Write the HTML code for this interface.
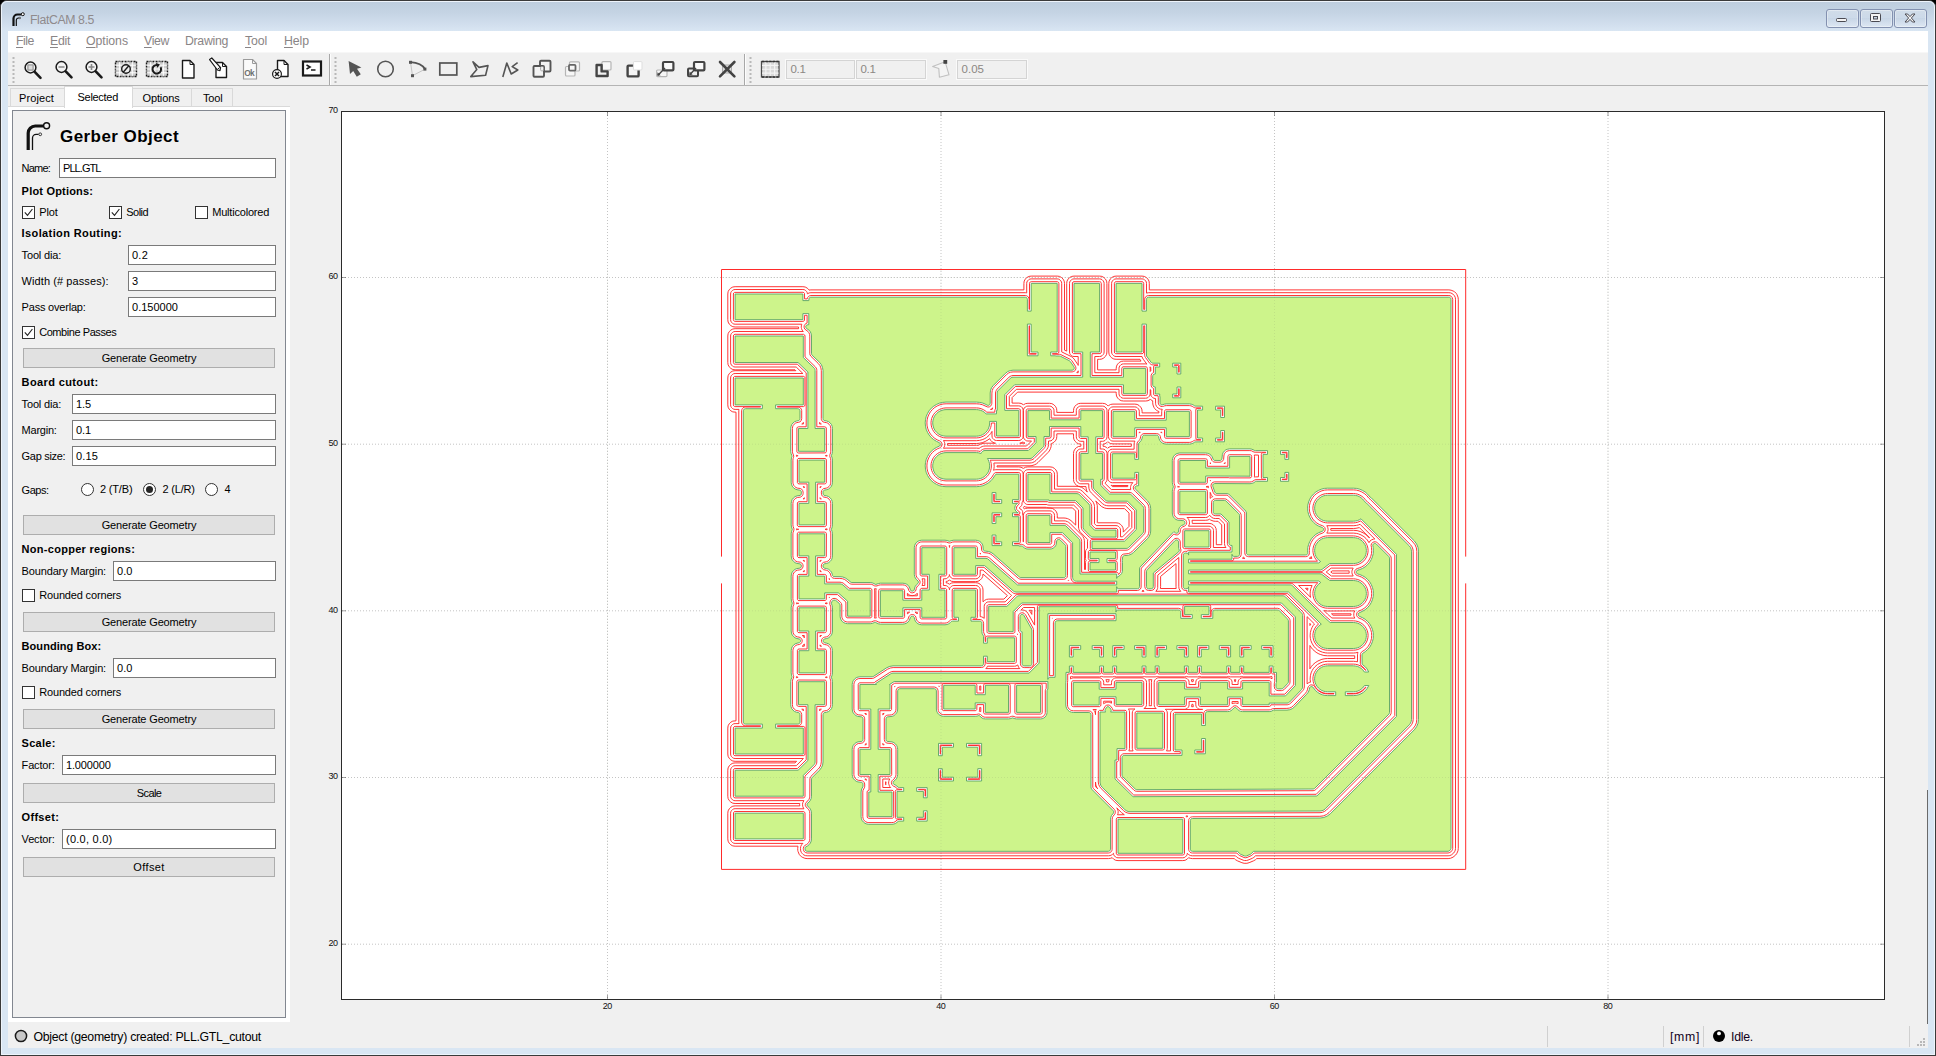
<!DOCTYPE html><html><head><meta charset="utf-8"><title>FlatCAM 8.5</title><style>
html,body{margin:0;padding:0;}
body{width:1936px;height:1056px;position:relative;overflow:hidden;background:#000;font-family:"Liberation Sans",sans-serif;}
.t{position:absolute;white-space:pre;}
#win{position:absolute;left:0;top:0;width:1934px;height:1054px;border:1px solid #3a3a3a;border-radius:7px 7px 0 0;background:#d9e6f3;overflow:hidden;}
#hl{position:absolute;left:0;top:0;width:1932px;height:1052px;border:1px solid #eef4fb;border-radius:6px 6px 0 0;pointer-events:none;}
#title{position:absolute;left:0;top:0;width:1934px;height:30px;background:linear-gradient(#bdcdde 0%,#c5d4e4 40%,#d2dfee 80%,#d9e6f3 100%);}
.cbtn{position:absolute;top:9px;height:17px;width:31px;border:1px solid #8391b0;border-radius:3px;background:linear-gradient(rgba(255,255,255,.25),rgba(255,255,255,.05) 45%,rgba(180,195,215,.15) 50%,rgba(255,255,255,.2));box-shadow:inset 0 0 0 1px rgba(255,255,255,.35);}
#client{position:absolute;left:7px;top:30px;width:1920px;height:1017px;background:#f0f0f0;}
.inp{position:absolute;background:#fff;border:1px solid #7a7a7a;box-sizing:border-box;}
.btn{position:absolute;background:#e1e1e1;border:1px solid #adadad;box-sizing:border-box;}
.cb{position:absolute;width:13px;height:13px;background:#fff;border:1px solid #333;box-sizing:border-box;}
.rb{position:absolute;width:13px;height:13px;background:#fff;border:1px solid #333;box-sizing:border-box;border-radius:50%;}
.dinp{position:absolute;background:#f0f0f0;border:1px solid #d4d4d4;box-sizing:border-box;box-shadow:0 0 0 1px #fafafa;}
svg{position:absolute;overflow:visible;}
</style></head><body>
<div id="win"><div id="title"></div><div id="hl"></div>
<div style="position:absolute;left:-1px;top:-1px;width:1936px;height:1056px;">
<svg style="left:11px;top:11px" width="16" height="16" viewBox="0 0 16 16"><path d="M2.5 15V7.5a4 4 0 0 1 4-4h4.2" fill="none" stroke="#111" stroke-width="2.2"/><path d="M5.3 15V9.2a2.2 2.2 0 0 1 2.2-2.2h0.8" fill="none" stroke="#111" stroke-width="1.2"/><circle cx="11.8" cy="3.2" r="1.5" fill="#fff" stroke="#111" stroke-width="1"/><circle cx="8.8" cy="7" r="0.8" fill="#fff" stroke="#111" stroke-width=".6"/></svg>
<span class="t" style="left:30.00px;top:14.29px;font-size:12.3px;line-height:12.3px;color:#8f8a8c;letter-spacing:-0.395px;">FlatCAM 8.5</span>
<div class="cbtn" style="left:1826px;"></div>
<div class="cbtn" style="left:1860px;"></div>
<div class="cbtn" style="left:1894px;"></div>
<svg style="left:1826px;top:9px" width="100" height="20" viewBox="0 0 100 20"><rect x="10.5" y="9.5" width="10" height="3" rx="1" fill="#f4f4f4" stroke="#4a4a52" stroke-width="1"/><rect x="44.5" y="4.5" width="10" height="8" rx="1" fill="#f4f4f4" stroke="#4a4a52" stroke-width="1"/><rect x="47.5" y="7.5" width="4" height="2.5" fill="#c9d5e3" stroke="#4a4a52" stroke-width="1"/><path d="M79 5l2.6 0 2.4 2.6 2.4-2.6 2.6 0-3.6 4 3.6 4-2.6 0-2.4-2.6-2.4 2.6-2.6 0 3.6-4z" fill="#f4f4f4" stroke="#4a4a52" stroke-width="1" stroke-linejoin="round"/></svg>
<div style="position:absolute;left:8px;top:31px;width:1920px;height:1017px;background:#f0f0f0;"></div>
<div style="position:absolute;left:8px;top:31px;width:1920px;height:21px;background:#fff;"></div>
<div style="position:absolute;left:8px;top:52px;width:1920px;height:1px;background:#f7f7f7;"></div>
<span class="t" style="left:16px;top:35.09px;font-size:12.3px;line-height:12.3px;color:#8a8586;letter-spacing:-0.455px;"><span style="text-decoration:underline;text-underline-offset:1.5px;text-decoration-thickness:1px;">F</span>ile</span>
<span class="t" style="left:50px;top:35.09px;font-size:12.3px;line-height:12.3px;color:#8a8586;letter-spacing:-0.299px;"><span style="text-decoration:underline;text-underline-offset:1.5px;text-decoration-thickness:1px;">E</span>dit</span>
<span class="t" style="left:86px;top:35.09px;font-size:12.3px;line-height:12.3px;color:#8a8586;letter-spacing:-0.055px;"><span style="text-decoration:underline;text-underline-offset:1.5px;text-decoration-thickness:1px;">O</span>ptions</span>
<span class="t" style="left:144px;top:35.09px;font-size:12.3px;line-height:12.3px;color:#8a8586;letter-spacing:-0.359px;"><span style="text-decoration:underline;text-underline-offset:1.5px;text-decoration-thickness:1px;">V</span>iew</span>
<span class="t" style="left:185.00px;top:35.09px;font-size:12.3px;line-height:12.3px;color:#8a8586;letter-spacing:-0.302px;">Drawing</span>
<span class="t" style="left:245px;top:35.09px;font-size:12.3px;line-height:12.3px;color:#8a8586;letter-spacing:-0.141px;"><span style="text-decoration:underline;text-underline-offset:1.5px;text-decoration-thickness:1px;">T</span>ool</span>
<span class="t" style="left:284px;top:35.09px;font-size:12.3px;line-height:12.3px;color:#8a8586;letter-spacing:-0.074px;"><span style="text-decoration:underline;text-underline-offset:1.5px;text-decoration-thickness:1px;">H</span>elp</span>
<div style="position:absolute;left:8px;top:85px;width:1920px;height:1px;background:#b4b4b4;"></div>
<div style="position:absolute;left:329px;top:54px;width:1px;height:31px;background:#a8a8a8;"></div>
<div style="position:absolute;left:330px;top:54px;width:1px;height:31px;background:#fdfdfd;"></div>
<div style="position:absolute;left:744px;top:54px;width:1px;height:31px;background:#a8a8a8;"></div>
<div style="position:absolute;left:745px;top:54px;width:1px;height:31px;background:#fdfdfd;"></div>
<svg style="left:12px;top:56px" width="4" height="28"><path d="M1.5 1v26" stroke="#b9b9b9" stroke-width="2" stroke-dasharray="2 2"/></svg>
<svg style="left:334px;top:56px" width="4" height="28"><path d="M1.5 1v26" stroke="#b9b9b9" stroke-width="2" stroke-dasharray="2 2"/></svg>
<svg style="left:749px;top:56px" width="4" height="28"><path d="M1.5 1v26" stroke="#b9b9b9" stroke-width="2" stroke-dasharray="2 2"/></svg>
<svg style="left:0;top:0" width="1100" height="90" viewBox="0 0 1100 90">
<circle cx="30.5" cy="67.5" r="5.4" fill="#f4f4f4" stroke="#1a1a1a" stroke-width="1.5"/><path d="M34.7 71.9L40.5 77.9" stroke="#1a1a1a" stroke-width="2.6" stroke-linecap="round"/><rect x="27.9" y="64.9" width="5.2" height="5.2" fill="#ddd" stroke="#888" stroke-width="1"/>
<circle cx="61.5" cy="67" r="5.4" fill="#f4f4f4" stroke="#1a1a1a" stroke-width="1.5"/><path d="M65.7 71.4L71.5 77.4" stroke="#1a1a1a" stroke-width="2.6" stroke-linecap="round"/><path d="M58.5 67h6" stroke="#888" stroke-width="1.6"/>
<circle cx="91.5" cy="67" r="5.4" fill="#f4f4f4" stroke="#1a1a1a" stroke-width="1.5"/><path d="M95.7 71.4L101.5 77.4" stroke="#1a1a1a" stroke-width="2.6" stroke-linecap="round"/><path d="M88.5 67h6M91.5 64v6" stroke="#888" stroke-width="1.6"/>
<rect x="115.5" y="61.5" width="21" height="15" fill="#cdcdcd" stroke="#1a1a1a" stroke-width="1.4" stroke-dasharray="2 1"/><path d="M119.7 61.5v15M123.9 61.5v15M128.1 61.5v15M132.3 61.5v15M115.5 65.2h21M115.5 69.0h21M115.5 72.8h21" stroke="#fff" stroke-width="1" fill="none"/>
<circle cx="126" cy="69" r="4.3" fill="#eee" stroke="#1a1a1a" stroke-width="1.4"/><path d="M123.2 72.2l5.6-6.4" stroke="#1a1a1a" stroke-width="1.4"/>
<rect x="146.5" y="61.5" width="21" height="15" fill="#cdcdcd" stroke="#1a1a1a" stroke-width="1.4" stroke-dasharray="2 1"/><path d="M150.7 61.5v15M154.9 61.5v15M159.1 61.5v15M163.3 61.5v15M146.5 65.2h21M146.5 69.0h21M146.5 72.8h21" stroke="#fff" stroke-width="1" fill="none"/>
<path d="M160.6 67.2a4.3 4.3 0 1 1-3.6-2.3" fill="none" stroke="#1a1a1a" stroke-width="2"/><path d="M155.8 63l4.2 1.6-2.6 3.2z" fill="#1a1a1a"/>
<path d="M182.5 60.5h7.5l4 4v13.5h-11.5z" fill="#fff" stroke="#1a1a1a" stroke-width="1.4" stroke-linejoin="round"/><path d="M190.0 60.5v4h4" fill="none" stroke="#1a1a1a" stroke-width="1"/>
<path d="M216 62.5h6.5l4 4v11h-10.5z" fill="#fff" stroke="#1a1a1a" stroke-width="1.4" stroke-linejoin="round"/><path d="M222.5 62.5v4h4" fill="none" stroke="#1a1a1a" stroke-width="1"/>
<path d="M209.6 59.6l2.2-1.6 8.8 9.6-0.6 3-2.6-0.6z" fill="#fff" stroke="#1a1a1a" stroke-width="1.2" stroke-linejoin="round"/><path d="M217.4 69.4l2.4-2" stroke="#1a1a1a" stroke-width="1"/>
<path d="M243.5 59.5h9l4 4v15.5h-13z" fill="#fafafa" stroke="#9a9a9a" stroke-width="1.2" stroke-linejoin="round"/><path d="M252.5 59.5v4h4" fill="none" stroke="#9a9a9a" stroke-width="1"/>
<text x="244.2" y="76" font-family="Liberation Sans, sans-serif" style="font-weight:bold" font-size="8.4" fill="#707070" letter-spacing="-0.6">Ok</text>
<path d="M277.5 60.5h6.5l4 4v12h-10.5z" fill="#fff" stroke="#1a1a1a" stroke-width="1.4" stroke-linejoin="round"/><path d="M284.0 60.5v4h4" fill="none" stroke="#1a1a1a" stroke-width="1"/>
<circle cx="277" cy="74" r="4.4" fill="#fff" stroke="#1a1a1a" stroke-width="1.2"/><path d="M275 72l4 4M279 72l-4 4" stroke="#1a1a1a" stroke-width="1.5"/>
<rect x="303" y="61.5" width="18" height="14" fill="#fff" stroke="#1a1a1a" stroke-width="2.2"/><path d="M306.5 65l3.6 2-3.6 2" fill="none" stroke="#1a1a1a" stroke-width="1.5"/><path d="M311 70h4.5" stroke="#1a1a1a" stroke-width="1.5"/>
<path d="M348.6 61l1.4 13 3.2-3 3.6 5.8 4-2.6-3.8-5.4 4.4-1.2z" fill="#555"/>
<circle cx="385.5" cy="69" r="7.8" fill="none" stroke="#555" stroke-width="1.6"/>
<path d="M410.5 62.2q11 0.6 14.5 7" fill="none" stroke="#555" stroke-width="1.7"/><path d="M410.5 62.2l2 13.5 12.5-6.5" fill="none" stroke="#c4c4c4" stroke-width="1"/><rect x="409" y="60.8" width="3" height="3" fill="#555"/><rect x="423.4" y="67.6" width="3" height="3" fill="#555"/><rect x="411" y="74.2" width="3" height="3" fill="#555"/>
<rect x="439.8" y="63" width="17" height="12" fill="none" stroke="#555" stroke-width="1.7"/>
<path d="M473 61.8l6 5.6 9-1.8-2.4 9.6-14.8 1.4 6-7z" fill="none" stroke="#555" stroke-width="1.6" stroke-linejoin="round"/>
<path d="M502.8 77l4-14 4.4 11 6.6-4-5.6-3.4 5.4-4" fill="none" stroke="#555" stroke-width="1.6" stroke-linejoin="round"/>
<rect x="540" y="60.8" width="10.5" height="10.700000000000003" rx="1" fill="#f4f4f4" stroke="#555" stroke-width="1.9"/>
<rect x="533.5" y="66" width="10.5" height="10.799999999999997" rx="1" fill="#f4f4f4" stroke="#555" stroke-width="1.9"/>
<rect x="540.6" y="66.6" width="3.0" height="4.200000000000003" rx="1" fill="none" stroke="#aaa" stroke-width="1"/>
<rect x="569.5" y="61.8" width="10.0" height="9.200000000000003" rx="1" fill="#f6f6f6" stroke="#b5b5b5" stroke-width="1.2"/>
<rect x="565.5" y="66.5" width="9.5" height="9.5" rx="1" fill="#f6f6f6" stroke="#b5b5b5" stroke-width="1.2"/>
<rect x="569" y="64.8" width="6.5" height="5.799999999999997" rx="1" fill="#f6f6f6" stroke="#666" stroke-width="1.8"/>
<rect x="602" y="61.6" width="9" height="8.399999999999999" rx="1" fill="#f8f8f8" stroke="#b5b5b5" stroke-width="1.2"/>
<path d="M596.6 65v11h11v-4.6h-6v-6.4z" fill="none" stroke="#444" stroke-width="2.4" stroke-linejoin="round"/>
<rect x="627.6" y="65.6" width="11.0" height="10.800000000000011" rx="1" fill="#f4f4f4" stroke="#444" stroke-width="2.4"/>
<rect x="633.4" y="61.6" width="8.600000000000023" height="8.399999999999999" rx="1" fill="#fff" stroke="#ddd" stroke-width="1"/>
<rect x="656.6" y="70" width="10.399999999999977" height="6.599999999999994" rx="1" fill="#f6f6f6" stroke="#b5b5b5" stroke-width="1.2"/>
<rect x="663" y="62" width="10.399999999999977" height="8.400000000000006" rx="1" fill="#fafafa" stroke="#444" stroke-width="2.2"/>
<path d="M665 68l-7 7.2" stroke="#444" stroke-width="1.4"/><path d="M657.2 75.8l0.4-3.6 3 3z" fill="#444"/>
<rect x="688" y="68.4" width="10" height="7.799999999999997" rx="1" fill="#f0f0f0" stroke="#444" stroke-width="2"/>
<rect x="694" y="62" width="10.399999999999977" height="8.400000000000006" rx="1" fill="#fafafa" stroke="#444" stroke-width="2.2"/>
<path d="M696 68l-6 6.4" stroke="#444" stroke-width="1.4"/><path d="M689.2 75.2l0.4-3.6 3 3z" fill="#444"/>
<rect x="722.5" y="65" width="9" height="8" fill="#ddd" stroke="#aaa" stroke-width="1"/><path d="M720 62l14.4 14.4M734.4 62l-14.4 14.4" stroke="#444" stroke-width="2.6" stroke-linecap="round"/>
<rect x="761.5" y="61.5" width="17.5" height="15.5" fill="#d9d9d9" stroke="#4a4a4a" stroke-width="1.3"/><path d="M765.9 62v14.5M770.2 62v14.5M774.6 62v14.5M762 65.4h16.5M762 69.3h16.5M762 73.1h16.5" stroke="#f4f4f4" stroke-width="1.1" fill="none"/><path d="M762 61.5h17M762 77h17" stroke="#333" stroke-width="1.3" stroke-dasharray="2.2 1.4"/>
<path d="M932.6 66.4l12.6-4.6 3.8 13-9.6 2.4-0.6-8.6z" fill="#f4f4f4" stroke="#c0c0c0" stroke-width="1.1" stroke-linejoin="round"/><rect x="943.4" y="60" width="3.8" height="3.8" fill="#444"/>
</svg>
<div class="dinp" style="left:786px;top:60px;width:69px;height:19px;"></div>
<span class="t" style="left:790.50px;top:63.67px;font-size:11.5px;line-height:11.5px;color:#8c8783;letter-spacing:-0.328px;">0.1</span>
<div class="dinp" style="left:856px;top:60px;width:70px;height:19px;"></div>
<span class="t" style="left:860.50px;top:63.67px;font-size:11.5px;line-height:11.5px;color:#8c8783;letter-spacing:-0.328px;">0.1</span>
<div class="dinp" style="left:957px;top:60px;width:70px;height:19px;"></div>
<span class="t" style="left:961.50px;top:63.67px;font-size:11.5px;line-height:11.5px;color:#8c8783;letter-spacing:0.030px;">0.05</span>
<div style="position:absolute;left:8px;top:107px;width:282px;height:915px;background:#fff;"></div>
<div style="position:absolute;left:8px;top:106px;width:282px;height:1px;background:#d9d9d9;"></div>
<div style="position:absolute;left:10px;top:88px;width:55px;height:18px;background:#f0f0f0;border:1px solid #d9d9d9;border-bottom:none;box-sizing:border-box;"></div>
<div style="position:absolute;left:132px;top:88px;width:60px;height:18px;background:#f0f0f0;border:1px solid #d9d9d9;border-bottom:none;box-sizing:border-box;"></div>
<div style="position:absolute;left:191px;top:88px;width:42px;height:18px;background:#f0f0f0;border:1px solid #d9d9d9;border-bottom:none;box-sizing:border-box;"></div>
<div style="position:absolute;left:64px;top:86px;width:69px;height:22px;background:#fff;border:1px solid #d9d9d9;border-bottom:none;box-sizing:border-box;"></div>
<span class="t" style="left:19.00px;top:92.69px;font-size:11px;line-height:11px;color:#000;letter-spacing:0.109px;">Project</span>
<span class="t" style="left:77.50px;top:92.09px;font-size:11px;line-height:11px;color:#000;letter-spacing:-0.288px;">Selected</span>
<span class="t" style="left:142.50px;top:92.69px;font-size:11px;line-height:11px;color:#000;letter-spacing:-0.130px;">Options</span>
<span class="t" style="left:203.00px;top:92.69px;font-size:11px;line-height:11px;color:#000;letter-spacing:-0.170px;">Tool</span>
<div style="position:absolute;left:12px;top:110px;width:274px;height:908px;background:#f0f0f0;border:1px solid #828790;box-sizing:border-box;"></div>
<svg style="left:24px;top:120px" width="30" height="32" viewBox="0 0 30 32"><path d="M4.2 30V13a7 7 0 0 1 7-7h8.5" fill="none" stroke="#111" stroke-width="3.2"/><path d="M8.5 30V18a3.6 3.6 0 0 1 3.6-3.6h2.6" fill="none" stroke="#111" stroke-width="1.3"/><circle cx="22.6" cy="5.8" r="3" fill="#f0f0f0" stroke="#111" stroke-width="1.4"/><circle cx="16.2" cy="14.3" r="1.4" fill="#f0f0f0" stroke="#111" stroke-width=".8"/></svg>
<span class="t" style="left:60.00px;top:127.61px;font-size:17px;line-height:17px;color:#000;letter-spacing:0.433px;font-weight:bold;">Gerber Object</span>
<span class="t" style="left:21.60px;top:163.19px;font-size:11px;line-height:11px;color:#000;letter-spacing:-0.779px;">Name:</span>
<div class="inp" style="left:59px;top:158px;width:217px;height:20px;"></div>
<span class="t" style="left:63.00px;top:163.39px;font-size:11px;line-height:11px;color:#000;letter-spacing:-0.931px;">PLL.GTL</span>
<span class="t" style="left:21.60px;top:186.19px;font-size:11px;line-height:11px;color:#000;letter-spacing:0.197px;font-weight:bold;">Plot Options:</span>
<div class="cb" style="left:22px;top:206px;"><svg style="left:0;top:0" width="11" height="11" viewBox="0 0 11 11"><path d="M1.8 5.4l2.7 2.9 4.9-6.3" fill="none" stroke="#222" stroke-width="1.1"/></svg></div>
<span class="t" style="left:39.20px;top:206.89px;font-size:11px;line-height:11px;color:#000;letter-spacing:-0.114px;">Plot</span>
<div class="cb" style="left:109px;top:206px;"><svg style="left:0;top:0" width="11" height="11" viewBox="0 0 11 11"><path d="M1.8 5.4l2.7 2.9 4.9-6.3" fill="none" stroke="#222" stroke-width="1.1"/></svg></div>
<span class="t" style="left:126.20px;top:206.89px;font-size:11px;line-height:11px;color:#000;letter-spacing:-0.492px;">Solid</span>
<div class="cb" style="left:195px;top:206px;"></div>
<span class="t" style="left:212.20px;top:206.89px;font-size:11px;line-height:11px;color:#000;letter-spacing:-0.192px;">Multicolored</span>
<span class="t" style="left:21.60px;top:228.49px;font-size:11px;line-height:11px;color:#000;letter-spacing:0.390px;font-weight:bold;">Isolation Routing:</span>
<span class="t" style="left:21.60px;top:249.89px;font-size:11px;line-height:11px;color:#000;letter-spacing:-0.163px;">Tool dia:</span>
<div class="inp" style="left:128px;top:245px;width:148px;height:20px;"></div>
<span class="t" style="left:132.00px;top:250.39px;font-size:11px;line-height:11px;color:#000;letter-spacing:0.237px;">0.2</span>
<span class="t" style="left:21.60px;top:275.89px;font-size:11px;line-height:11px;color:#000;letter-spacing:0.084px;">Width (# passes):</span>
<div class="inp" style="left:128px;top:271px;width:148px;height:20px;"></div>
<span class="t" style="left:132.00px;top:276.39px;font-size:11px;line-height:11px;color:#000;">3</span>
<span class="t" style="left:21.60px;top:301.69px;font-size:11px;line-height:11px;color:#000;letter-spacing:-0.203px;">Pass overlap:</span>
<div class="inp" style="left:128px;top:297px;width:148px;height:20px;"></div>
<span class="t" style="left:132.00px;top:302.39px;font-size:11px;line-height:11px;color:#000;letter-spacing:0.016px;">0.150000</span>
<div class="cb" style="left:22px;top:326px;"><svg style="left:0;top:0" width="11" height="11" viewBox="0 0 11 11"><path d="M1.8 5.4l2.7 2.9 4.9-6.3" fill="none" stroke="#222" stroke-width="1.1"/></svg></div>
<span class="t" style="left:39.20px;top:326.89px;font-size:11px;line-height:11px;color:#000;letter-spacing:-0.439px;">Combine Passes</span>
<div class="btn" style="left:23px;top:348px;width:252px;height:20px;"></div>
<span class="t" style="left:101.70px;top:352.99px;font-size:11px;line-height:11px;color:#000;letter-spacing:-0.153px;">Generate Geometry</span>
<span class="t" style="left:21.60px;top:377.29px;font-size:11px;line-height:11px;color:#000;letter-spacing:0.377px;font-weight:bold;">Board cutout:</span>
<span class="t" style="left:21.60px;top:398.89px;font-size:11px;line-height:11px;color:#000;letter-spacing:-0.163px;">Tool dia:</span>
<div class="inp" style="left:72px;top:394px;width:204px;height:20px;"></div>
<span class="t" style="left:76.00px;top:399.39px;font-size:11px;line-height:11px;color:#000;letter-spacing:-0.097px;">1.5</span>
<span class="t" style="left:21.60px;top:424.89px;font-size:11px;line-height:11px;color:#000;letter-spacing:-0.239px;">Margin:</span>
<div class="inp" style="left:72px;top:420px;width:204px;height:20px;"></div>
<span class="t" style="left:76.00px;top:425.39px;font-size:11px;line-height:11px;color:#000;letter-spacing:-0.097px;">0.1</span>
<span class="t" style="left:21.60px;top:450.89px;font-size:11px;line-height:11px;color:#000;letter-spacing:-0.307px;">Gap size:</span>
<div class="inp" style="left:72px;top:446px;width:204px;height:20px;"></div>
<span class="t" style="left:76.00px;top:451.39px;font-size:11px;line-height:11px;color:#000;letter-spacing:0.148px;">0.15</span>
<span class="t" style="left:21.60px;top:484.89px;font-size:11px;line-height:11px;color:#000;letter-spacing:-0.469px;">Gaps:</span>
<div class="rb" style="left:80.5px;top:483.0px;"></div>
<span class="t" style="left:100.00px;top:484.39px;font-size:11px;line-height:11px;color:#000;letter-spacing:-0.173px;">2 (T/B)</span>
<div class="rb" style="left:143.0px;top:483.0px;"><div style="position:absolute;left:2px;top:2px;width:7px;height:7px;border-radius:50%;background:#262626;"></div></div>
<span class="t" style="left:162.50px;top:484.39px;font-size:11px;line-height:11px;color:#000;letter-spacing:-0.188px;">2 (L/R)</span>
<div class="rb" style="left:205.0px;top:483.0px;"></div>
<span class="t" style="left:224.50px;top:484.39px;font-size:11px;line-height:11px;color:#000;">4</span>
<div class="btn" style="left:23px;top:515px;width:252px;height:20px;"></div>
<span class="t" style="left:101.70px;top:519.99px;font-size:11px;line-height:11px;color:#000;letter-spacing:-0.153px;">Generate Geometry</span>
<span class="t" style="left:21.60px;top:544.09px;font-size:11px;line-height:11px;color:#000;letter-spacing:0.286px;font-weight:bold;">Non-copper regions:</span>
<span class="t" style="left:21.60px;top:565.89px;font-size:11px;line-height:11px;color:#000;letter-spacing:-0.151px;">Boundary Margin:</span>
<div class="inp" style="left:113px;top:561px;width:163px;height:20px;"></div>
<span class="t" style="left:117.00px;top:566.39px;font-size:11px;line-height:11px;color:#000;letter-spacing:0.070px;">0.0</span>
<div class="cb" style="left:22px;top:589px;"></div>
<span class="t" style="left:39.20px;top:589.89px;font-size:11px;line-height:11px;color:#000;letter-spacing:-0.159px;">Rounded corners</span>
<div class="btn" style="left:23px;top:612px;width:252px;height:20px;"></div>
<span class="t" style="left:101.70px;top:616.99px;font-size:11px;line-height:11px;color:#000;letter-spacing:-0.153px;">Generate Geometry</span>
<span class="t" style="left:21.60px;top:641.49px;font-size:11px;line-height:11px;color:#000;letter-spacing:0.053px;font-weight:bold;">Bounding Box:</span>
<span class="t" style="left:21.60px;top:662.89px;font-size:11px;line-height:11px;color:#000;letter-spacing:-0.151px;">Boundary Margin:</span>
<div class="inp" style="left:113px;top:658px;width:163px;height:20px;"></div>
<span class="t" style="left:117.00px;top:663.39px;font-size:11px;line-height:11px;color:#000;letter-spacing:0.070px;">0.0</span>
<div class="cb" style="left:22px;top:686px;"></div>
<span class="t" style="left:39.20px;top:686.89px;font-size:11px;line-height:11px;color:#000;letter-spacing:-0.159px;">Rounded corners</span>
<div class="btn" style="left:23px;top:709px;width:252px;height:20px;"></div>
<span class="t" style="left:101.70px;top:713.99px;font-size:11px;line-height:11px;color:#000;letter-spacing:-0.153px;">Generate Geometry</span>
<span class="t" style="left:21.60px;top:738.49px;font-size:11px;line-height:11px;color:#000;letter-spacing:0.265px;font-weight:bold;">Scale:</span>
<span class="t" style="left:21.60px;top:759.89px;font-size:11px;line-height:11px;color:#000;letter-spacing:-0.175px;">Factor:</span>
<div class="inp" style="left:62px;top:755px;width:214px;height:20px;"></div>
<span class="t" style="left:66.00px;top:760.39px;font-size:11px;line-height:11px;color:#000;letter-spacing:-0.159px;">1.000000</span>
<div class="btn" style="left:23px;top:783px;width:252px;height:20px;"></div>
<span class="t" style="left:136.75px;top:787.99px;font-size:11px;line-height:11px;color:#000;letter-spacing:-0.603px;">Scale</span>
<span class="t" style="left:21.60px;top:811.99px;font-size:11px;line-height:11px;color:#000;letter-spacing:0.294px;font-weight:bold;">Offset:</span>
<span class="t" style="left:21.60px;top:833.89px;font-size:11px;line-height:11px;color:#000;letter-spacing:-0.177px;">Vector:</span>
<div class="inp" style="left:62px;top:829px;width:214px;height:20px;"></div>
<span class="t" style="left:66.00px;top:834.39px;font-size:11px;line-height:11px;color:#000;letter-spacing:0.248px;">(0.0, 0.0)</span>
<div class="btn" style="left:23px;top:857px;width:252px;height:20px;"></div>
<span class="t" style="left:133.25px;top:861.99px;font-size:11px;line-height:11px;color:#000;letter-spacing:0.393px;">Offset</span>
<svg style="left:14px;top:1029px" width="14" height="14"><circle cx="7" cy="7" r="5.6" fill="#c8c8c8" stroke="#1a1a1a" stroke-width="1.5"/></svg>
<span class="t" style="left:33.50px;top:1030.59px;font-size:12.3px;line-height:12.3px;color:#000;letter-spacing:-0.287px;">Object (geometry) created: PLL.GTL_cutout</span>
<div style="position:absolute;left:1547px;top:1026px;width:1px;height:21px;background:#d0d0d0;"></div>
<div style="position:absolute;left:1663px;top:1026px;width:1px;height:21px;background:#d0d0d0;"></div>
<div style="position:absolute;left:1703px;top:1026px;width:1px;height:21px;background:#d0d0d0;"></div>
<div style="position:absolute;left:1909px;top:1026px;width:1px;height:21px;background:#d0d0d0;"></div>
<span class="t" style="left:1670.00px;top:1030.59px;font-size:12.3px;line-height:12.3px;color:#100020;letter-spacing:0.669px;">[mm]</span>
<svg style="left:1712px;top:1029px" width="14" height="14"><circle cx="7" cy="7" r="6" fill="#000"/><circle cx="7" cy="4.4" r="1.9" fill="#fff"/></svg>
<span class="t" style="left:1731.00px;top:1030.59px;font-size:12.3px;line-height:12.3px;color:#100020;letter-spacing:-0.249px;">Idle.</span>
<svg style="left:1915px;top:1036px" width="12" height="12"><g fill="#b8b8b8"><rect x="8" y="2" width="2" height="2"/><rect x="5" y="5" width="2" height="2"/><rect x="8" y="5" width="2" height="2"/><rect x="2" y="8" width="2" height="2"/><rect x="5" y="8" width="2" height="2"/><rect x="8" y="8" width="2" height="2"/></g></svg>
<div style="position:absolute;left:1927px;top:790px;width:1px;height:234px;background:#6a6a6a;"></div>
<div style="position:absolute;left:341px;top:111px;width:1544px;height:889px;background:#fff;"></div>
<svg style="left:0;top:0" width="1936" height="1056" viewBox="0 0 1936 1056">
<path d="M607.5 112V999" stroke="#c4c4c4" stroke-width="1" stroke-dasharray="1 2" fill="none"/>
<path d="M607.5 112v4M607.5 995v4" stroke="#333" stroke-width="1" stroke-opacity=".45"/>
<path d="M941 112V999" stroke="#c4c4c4" stroke-width="1" stroke-dasharray="1 2" fill="none"/>
<path d="M941 112v4M941 995v4" stroke="#333" stroke-width="1" stroke-opacity=".45"/>
<path d="M1274.5 112V999" stroke="#c4c4c4" stroke-width="1" stroke-dasharray="1 2" fill="none"/>
<path d="M1274.5 112v4M1274.5 995v4" stroke="#333" stroke-width="1" stroke-opacity=".45"/>
<path d="M1608 112V999" stroke="#c4c4c4" stroke-width="1" stroke-dasharray="1 2" fill="none"/>
<path d="M1608 112v4M1608 995v4" stroke="#333" stroke-width="1" stroke-opacity=".45"/>
<path d="M342 277.5H1884" stroke="#c4c4c4" stroke-width="1" stroke-dasharray="1 2" fill="none"/>
<path d="M342 277.5h4M1880 277.5h4" stroke="#333" stroke-width="1" stroke-opacity=".45"/>
<path d="M342 444.2H1884" stroke="#c4c4c4" stroke-width="1" stroke-dasharray="1 2" fill="none"/>
<path d="M342 444.2h4M1880 444.2h4" stroke="#333" stroke-width="1" stroke-opacity=".45"/>
<path d="M342 610.8H1884" stroke="#c4c4c4" stroke-width="1" stroke-dasharray="1 2" fill="none"/>
<path d="M342 610.8h4M1880 610.8h4" stroke="#333" stroke-width="1" stroke-opacity=".45"/>
<path d="M342 777.5H1884" stroke="#c4c4c4" stroke-width="1" stroke-dasharray="1 2" fill="none"/>
<path d="M342 777.5h4M1880 777.5h4" stroke="#333" stroke-width="1" stroke-opacity=".45"/>
<path d="M342 944.2H1884" stroke="#c4c4c4" stroke-width="1" stroke-dasharray="1 2" fill="none"/>
<path d="M342 944.2h4M1880 944.2h4" stroke="#333" stroke-width="1" stroke-opacity=".45"/>
<path d="M727.8,404.9L728.1,407.2L729.2,409.2L730.8,410.8L732.8,411.9L736.0,412.2L736.0,720.8L732.8,721.1L730.8,722.2L729.2,723.8L728.1,725.8L727.8,728.1L727.8,754.0L728.1,756.3L729.2,758.3L730.8,759.9L732.8,761.0L735.1,761.3L796.6,761.3L795.1,762.9L735.1,762.9L732.8,763.2L730.8,764.3L729.2,765.9L728.1,767.9L727.8,770.2L727.8,796.2L728.1,798.5L729.2,800.5L730.8,802.1L732.8,803.2L735.1,803.5L799.8,803.5L799.6,804.3L799.8,805.9L735.1,805.9L732.8,806.2L730.8,807.3L729.2,808.9L728.1,810.9L727.8,813.2L727.8,838.9L728.1,841.2L729.2,843.2L730.8,844.8L732.8,845.9L735.1,846.2L798.0,846.2L797.7,848.4L797.8,850.6L798.0,851.4L799.1,854.1L799.5,854.8L801.5,856.8L802.2,857.2L804.9,858.3L807.1,858.6L1108.4,858.6L1110.6,858.3L1112.2,857.7L1113.7,859.2L1115.7,860.3L1118.0,860.6L1182.8,860.6L1185.1,860.3L1187.1,859.2L1188.6,857.7L1190.2,858.3L1192.4,858.6L1234.3,858.6L1235.5,859.7L1237.6,860.9L1241.9,862.7L1244.1,863.3L1246.9,863.3L1249.1,862.7L1253.4,860.9L1255.5,859.7L1256.7,858.6L1448.1,858.6L1450.4,858.3L1453.0,857.2L1455.6,855.1L1456.9,853.3L1458.0,850.7L1458.3,848.4L1458.3,299.3L1458.0,297.1L1456.9,294.4L1456.5,293.7L1454.5,291.7L1453.8,291.3L1451.1,290.2L1448.9,289.9L1149.3,289.9L1149.3,283.4L1149.0,281.1L1147.9,279.1L1146.3,277.5L1144.3,276.4L1142.0,276.1L1116.1,276.1L1113.8,276.4L1111.8,277.5L1110.2,279.1L1109.1,281.1L1108.8,283.4L1108.8,352.0L1109.1,354.3L1110.2,356.3L1111.8,357.9L1113.8,359.0L1116.1,359.3L1140.0,359.3L1141.0,361.1L1123.5,361.1L1121.2,361.4L1119.2,362.5L1117.6,364.1L1116.5,366.1L1116.2,368.4L1116.2,369.9L1097.6,369.9L1097.6,359.3L1099.6,359.3L1101.9,359.0L1103.9,357.9L1105.5,356.3L1106.6,354.3L1106.9,352.0L1106.9,283.4L1106.6,281.1L1105.5,279.1L1103.9,277.5L1101.9,276.4L1099.6,276.1L1074.0,276.1L1071.7,276.4L1069.7,277.5L1068.1,279.1L1067.0,281.1L1066.7,283.4L1066.7,351.1L1064.5,350.1L1064.5,283.4L1064.2,281.1L1063.1,279.1L1061.5,277.5L1059.5,276.4L1057.2,276.1L1031.2,276.1L1028.9,276.4L1026.9,277.5L1025.3,279.1L1024.2,281.1L1023.9,283.4L1023.9,289.9L810.9,289.9L809.0,290.1L808.8,289.7L807.2,288.1L805.2,287.0L802.9,286.7L735.1,286.7L732.8,287.0L730.8,288.1L729.2,289.7L728.1,291.7L727.8,294.0L727.8,319.7L728.1,322.0L729.2,324.0L730.8,325.6L732.8,326.7L735.1,327.0L798.5,327.0L798.6,328.7L735.1,328.7L732.8,329.0L730.8,330.1L729.2,331.7L728.1,333.7L727.8,336.0L727.8,362.5L728.1,364.8L729.2,366.8L730.8,368.4L732.8,369.5L735.1,369.8L795.0,369.8L795.9,370.7L735.1,370.7L732.8,371.0L730.8,372.1L729.2,373.7L728.1,375.7L727.8,378.0ZM1330.8,528.5L1353.4,528.5L1356.0,528.3L1359.4,527.6L1369.6,537.8L1369.3,538.0L1367.4,535.8L1365.8,534.5L1363.1,532.8L1360.2,531.5L1357.1,530.6L1353.4,530.3L1330.8,530.3ZM1024.5,509.0L1023.4,507.8L1023.9,507.1L1024.2,506.3L1025.6,507.0L1027.9,507.3L1046.3,507.3L1046.7,507.6L1049.0,507.9L1072.5,507.9L1075.7,511.1L1075.7,525.1L1071.0,520.6L1068.6,519.1L1067.7,518.7L1065.9,518.2L1064.0,518.0L1057.3,518.0L1057.3,515.4L1057.0,513.1L1055.9,511.1L1054.3,509.5L1052.3,508.4L1050.0,508.1L1027.9,508.1L1025.6,508.4ZM1023.3,468.5L1023.1,468.3L1021.0,467.2L1018.8,466.9L997.0,466.9L997.0,465.8L1030.0,465.8L1032.0,465.6L1034.8,464.7L1036.5,463.8L1038.0,462.5L1048.0,452.5L1049.3,451.0L1050.6,448.3L1051.1,446.5L1051.3,443.5L1051.8,443.5L1053.8,442.4L1055.4,440.8L1056.5,438.8L1056.8,436.5L1056.8,433.8L1073.5,433.8L1073.5,436.8L1073.8,439.1L1074.9,441.1L1076.5,442.7L1078.5,443.8L1080.9,444.1L1080.9,446.2L1078.5,446.5L1076.5,447.6L1074.9,449.2L1073.8,451.2L1073.5,453.5L1073.5,479.3L1073.8,481.6L1074.9,483.6L1076.5,485.2L1078.5,486.3L1080.8,486.6L1086.0,486.6L1086.2,488.9L1086.7,490.8L1087.4,492.1L1084.7,489.4L1083.2,488.3L1081.6,487.3L1078.9,486.5L1077.0,486.3L1057.3,486.3L1057.3,474.2L1057.0,471.9L1055.9,469.9L1054.3,468.3L1052.3,467.2L1050.0,466.9L1027.9,466.9L1025.6,467.2L1023.6,468.3ZM947.5,445.3L947.5,443.5L976.4,443.5L979.1,443.3L982.2,442.7L985.2,441.5L988.0,439.9L989.7,438.6L990.6,440.3L992.2,441.9L994.2,443.0L995.5,443.2L984.0,443.2L981.2,443.9L980.2,444.3L978.3,445.4L976.4,445.3ZM1019.8,443.2L1021.0,443.0L1023.1,441.9L1023.6,442.4L1025.0,443.2ZM1023.4,404.8L1023.1,404.5L1021.0,403.4L1018.8,403.1L1012.1,403.1L1012.1,397.6L1017.6,392.1L1116.2,392.1L1116.2,393.7L1116.5,396.0L1117.6,398.0L1119.2,399.6L1121.2,400.7L1123.5,401.0L1145.7,401.0L1148.0,400.7L1150.0,399.6L1150.3,399.3L1151.0,399.9L1152.7,400.8L1152.7,402.8L1153.0,405.0L1154.1,407.7L1154.5,408.3L1156.5,410.4L1157.2,410.8L1158.9,411.5L1158.9,412.9L1142.1,412.9L1142.1,411.4L1141.8,409.1L1140.7,407.1L1139.1,405.5L1137.1,404.4L1134.8,404.1L1113.0,404.1L1110.7,404.4L1108.7,405.5L1108.1,406.0L1106.8,404.7L1104.8,403.6L1102.5,403.3L1080.8,403.3L1078.5,403.6L1076.5,404.7L1074.9,406.3L1073.8,408.3L1073.5,410.6L1073.5,412.4L1056.8,412.4L1056.8,410.6L1056.5,408.3L1055.4,406.3L1053.8,404.7L1051.8,403.6L1049.5,403.3L1027.9,403.3L1025.6,403.6ZM1131.3,443.9L1131.3,446.4L1112.3,446.4L1110.0,446.7L1108.0,447.8L1107.5,448.3L1106.8,447.6L1104.8,446.5L1103.1,446.3L1103.1,444.0L1104.8,443.8L1106.8,442.7L1107.8,441.7L1108.7,442.5L1110.7,443.6L1113.0,443.9ZM1111.1,485.3L1112.3,485.5L1128.0,485.5L1127.7,486.6L1112.4,486.6ZM1123.3,532.1L1123.3,530.1L1123.0,527.8L1121.9,525.8L1120.3,524.2L1118.3,523.1L1116.0,522.8L1097.5,522.8L1097.3,522.6L1097.3,505.6L1096.7,502.9L1095.7,501.0L1101.1,506.1L1101.8,506.7L1104.3,507.9L1106.1,508.4L1108.0,508.6L1124.5,508.6L1129.0,513.1L1129.0,526.4ZM949.5,580.1L951.6,581.3L953.9,581.6L975.7,581.6L978.0,581.3L980.0,580.2L981.6,578.6L982.7,576.6L983.0,574.0L1007.4,595.6L1003.9,599.1L988.7,599.1L986.4,599.4L984.4,600.5L983.0,601.8L983.0,590.0L982.7,587.7L981.6,585.7L980.0,584.1L978.0,583.0L975.7,582.7L953.9,582.7L951.6,583.0L949.5,584.2L947.3,583.0L946.2,582.9L946.2,581.4L947.3,581.3ZM1031.8,610.3L1031.8,614.4L1030.3,611.8L1029.2,610.3ZM886.0,784.7L885.6,784.7L885.6,781.8L886.0,781.8L885.8,783.6ZM1305.5,588.3L1308.0,588.3L1307.5,590.4ZM1309.9,623.4L1310.7,624.2L1309.9,625.5ZM1235.8,679.7L1235.4,681.7L1234.8,681.7L1234.4,679.7ZM1193.5,679.7L1193.1,681.7L1191.8,681.7L1191.4,679.7ZM1151.9,679.7L1151.7,680.0L1151.4,682.3L1151.4,704.8L1151.5,705.7L1149.1,705.7L1149.3,704.5L1149.3,682.4L1149.0,680.1L1148.7,679.7ZM1109.3,679.7L1109.0,680.1L1108.7,681.9L1106.5,681.9L1106.2,680.1L1105.9,679.7ZM1192.0,520.3L1205.7,520.3L1208.0,520.0L1209.5,519.2L1210.4,519.9L1213.1,521.0L1215.3,521.3L1218.0,521.3L1221.7,525.0L1221.7,543.4L1221.8,544.7L1216.3,544.7L1216.3,530.7L1216.0,528.4L1214.9,526.4L1213.3,524.8L1211.3,523.7L1209.0,523.4L1192.3,523.4L1192.3,522.6ZM1160.4,588.5L1160.6,586.7L1160.6,576.4L1176.0,563.6L1176.0,586.7L1176.2,588.5ZM1331.5,613.8L1351.0,613.8L1351.0,615.2L1333.0,615.2ZM1349.2,573.2L1332.3,573.2L1330.8,572.0L1332.1,570.9L1349.2,570.9L1349.1,571.7ZM1354.7,655.8L1354.7,658.5L1327.6,658.5L1325.0,658.7L1321.9,659.3L1317.9,661.0L1315.2,662.7L1312.8,664.8L1311.5,666.4L1309.9,668.8L1309.9,645.5L1311.5,647.9L1312.8,649.5L1316.1,652.3L1318.9,653.9L1320.8,654.6L1323.9,655.5L1327.6,655.8ZM1193.3,706.7L1191.6,706.7L1191.9,704.3L1193.0,704.3ZM1021.3,509.6L1021.5,509.5L1021.3,509.7Z" fill="none" stroke="#ff2a2a" stroke-width="0.95" stroke-linejoin="round"/>
<path d="M730.6,404.9L730.8,406.3L731.5,407.5L732.5,408.5L733.7,409.2L735.1,409.4L739.0,409.4L738.8,410.8L738.8,722.0L739.0,723.6L735.1,723.6L733.7,723.8L732.5,724.5L731.5,725.5L730.8,726.7L730.6,728.1L730.6,754.0L730.8,755.4L731.5,756.6L732.5,757.6L733.7,758.3L735.1,758.5L803.4,758.5L796.3,765.7L735.1,765.7L733.7,765.9L732.5,766.6L731.5,767.6L730.8,768.8L730.6,770.2L730.6,796.2L730.8,797.6L731.5,798.8L732.5,799.8L733.7,800.5L735.1,800.7L803.9,800.6L802.8,802.7L802.5,804.3L802.8,806.7L803.9,808.8L735.1,808.7L733.7,808.9L732.5,809.6L731.5,810.6L730.8,811.8L730.6,813.2L730.6,838.9L730.8,840.3L731.5,841.5L732.5,842.5L733.7,843.2L735.1,843.4L802.9,843.4L801.9,844.4L801.4,845.1L800.7,846.7L800.5,848.4L800.7,850.9L801.4,852.5L801.9,853.2L803.1,854.4L803.8,854.9L805.4,855.6L807.1,855.8L1108.4,855.8L1110.1,855.6L1111.7,854.9L1112.4,854.4L1113.5,853.3L1113.7,854.7L1114.4,855.9L1115.4,856.9L1116.6,857.6L1118.0,857.8L1182.8,857.8L1184.2,857.6L1185.4,856.9L1186.4,855.9L1187.1,854.7L1187.3,853.3L1188.4,854.4L1189.1,854.9L1190.7,855.6L1192.4,855.8L1235.5,855.8L1237.1,857.4L1238.7,858.3L1243.8,860.4L1244.6,860.5L1246.4,860.5L1248.0,860.1L1252.3,858.3L1253.9,857.4L1255.5,855.8L1448.1,855.8L1449.8,855.6L1451.4,854.9L1453.6,853.1L1454.6,851.7L1455.3,850.1L1455.5,848.4L1455.5,299.3L1455.3,297.6L1454.6,296.0L1454.1,295.3L1452.9,294.1L1452.2,293.6L1450.6,292.9L1448.9,292.7L1148.5,292.7L1146.5,293.1L1146.5,283.4L1146.3,282.0L1145.6,280.8L1144.6,279.8L1143.4,279.1L1142.0,278.9L1116.1,278.9L1114.7,279.1L1113.5,279.8L1112.5,280.8L1111.8,282.0L1111.6,283.4L1111.6,352.0L1111.8,353.4L1112.5,354.6L1113.5,355.6L1114.7,356.3L1116.1,356.5L1142.0,356.5L1142.5,358.0L1143.2,359.2L1146.8,364.1L1145.7,363.9L1123.5,363.9L1122.1,364.1L1120.9,364.8L1119.9,365.8L1119.2,367.0L1119.0,368.4L1119.0,372.7L1094.8,372.7L1094.8,356.5L1099.6,356.5L1101.0,356.3L1102.2,355.6L1103.2,354.6L1103.9,353.4L1104.1,352.0L1104.1,283.4L1103.9,282.0L1103.2,280.8L1102.2,279.8L1101.0,279.1L1099.6,278.9L1074.0,278.9L1072.6,279.1L1071.4,279.8L1070.4,280.8L1069.7,282.0L1069.5,283.4L1069.5,352.0L1069.7,353.4L1070.4,354.6L1071.4,355.6L1072.6,356.3L1074.0,356.5L1078.2,356.5L1078.2,365.4L1077.7,364.4L1074.1,359.0L1072.5,357.4L1071.5,356.7L1061.7,351.9L1061.7,283.4L1061.5,282.0L1060.8,280.8L1059.8,279.8L1058.6,279.1L1057.2,278.9L1031.2,278.9L1029.8,279.1L1028.6,279.8L1027.6,280.8L1026.9,282.0L1026.7,283.4L1026.7,292.9L1025.3,292.7L810.9,292.7L809.2,292.9L807.4,293.8L807.2,292.6L806.5,291.4L805.5,290.4L804.3,289.7L802.9,289.5L735.1,289.5L733.7,289.7L732.5,290.4L731.5,291.4L730.8,292.6L730.6,294.0L730.6,319.7L730.8,321.1L731.5,322.3L732.5,323.3L733.7,324.0L735.1,324.2L801.8,324.2L801.3,325.9L801.3,327.7L801.5,328.5L802.1,330.1L803.3,331.5L735.1,331.5L733.7,331.7L732.5,332.4L731.5,333.4L730.8,334.6L730.6,336.0L730.6,362.5L730.8,363.9L731.5,365.1L732.5,366.1L733.7,366.8L735.1,367.0L796.2,367.0L802.9,373.5L735.1,373.5L733.7,373.7L732.5,374.4L731.5,375.4L730.8,376.6L730.6,378.0ZM1186.8,817.2L1186.4,816.6L1185.9,816.0L1187.8,816.0ZM1326.8,525.7L1353.8,525.7L1356.5,525.4L1358.5,524.9L1360.1,524.3L1374.8,539.0L1373.5,539.1L1371.3,540.0L1370.0,541.0L1369.0,542.7L1367.3,540.0L1366.0,538.5L1364.0,536.7L1361.0,534.9L1358.5,533.9L1356.5,533.4L1353.4,533.1L1326.8,533.1L1327.7,531.5L1328.1,529.8L1328.1,529.0L1327.7,527.3ZM1128.8,750.9L1129.3,750.0L1129.5,748.6L1129.5,712.0L1129.3,710.6L1128.6,709.4L1128.3,709.0L1134.9,709.0L1134.2,709.4L1133.2,710.4L1132.5,711.6L1132.3,713.0L1132.3,748.3L1132.5,749.7L1133.1,750.9ZM1111.5,703.2L1109.7,702.4L1108.8,702.2L1107.1,702.2L1106.3,702.4L1104.7,703.1L1103.7,703.8L1103.7,701.2L1111.5,701.2ZM1096.3,709.5L1095.7,710.6L1095.5,712.0L1095.5,714.6L1095.3,712.9L1094.6,711.3L1094.1,710.6L1093.0,709.5ZM1070.5,678.9L1070.5,676.7L1071.3,676.4L1071.8,676.6L1073.2,676.9L1099.7,676.9L1101.1,676.6L1101.6,676.4L1102.1,676.6L1103.5,676.9L1112.8,676.9L1114.2,676.6L1114.7,676.4L1115.2,676.6L1116.6,676.9L1142.1,676.9L1143.5,676.6L1144.0,676.4L1144.5,676.6L1145.9,676.9L1155.2,676.9L1156.6,676.6L1157.1,676.4L1157.6,676.6L1159.0,676.9L1184.4,676.9L1185.8,676.6L1186.3,676.4L1186.8,676.6L1188.2,676.9L1197.5,676.9L1198.9,676.6L1199.4,676.4L1199.9,676.6L1201.3,676.9L1226.8,676.9L1228.2,676.6L1228.7,676.4L1229.2,676.6L1230.6,676.9L1239.9,676.9L1241.3,676.6L1241.8,676.4L1242.3,676.6L1243.7,676.9L1269.2,676.9L1270.6,676.6L1271.1,676.4L1272.0,676.7L1272.0,678.8L1270.6,678.0L1269.2,677.8L1242.6,677.8L1241.2,678.0L1240.0,678.7L1239.0,679.7L1238.3,680.9L1238.1,682.3L1238.1,684.5L1232.1,684.5L1232.1,682.3L1231.9,680.9L1231.2,679.7L1230.2,678.7L1229.0,678.0L1227.6,677.8L1200.3,677.8L1198.9,678.0L1197.7,678.7L1196.7,679.7L1196.0,680.9L1195.8,682.3L1195.8,684.5L1189.1,684.5L1189.1,682.3L1188.9,680.9L1188.2,679.7L1187.2,678.7L1186.0,678.0L1184.6,677.8L1158.7,677.8L1157.3,678.0L1156.1,678.7L1155.1,679.7L1154.4,680.9L1154.2,682.3L1154.2,704.8L1154.4,706.2L1155.1,707.4L1156.2,708.5L1143.9,708.5L1144.6,708.1L1145.6,707.1L1146.3,705.9L1146.5,704.5L1146.5,682.4L1146.3,681.0L1145.6,679.8L1144.6,678.8L1143.4,678.1L1142.0,677.9L1116.0,677.9L1114.6,678.1L1113.4,678.8L1112.4,679.8L1111.7,681.0L1111.5,682.4L1111.5,684.8L1103.7,684.8L1103.7,682.4L1103.5,681.0L1102.8,679.8L1101.8,678.8L1100.6,678.1L1099.2,677.9L1073.3,677.9L1071.9,678.1ZM1166.5,750.9L1167.1,749.7L1167.3,748.3L1167.3,713.0L1167.1,711.6L1166.4,710.4L1165.3,709.3L1184.6,709.3L1186.0,709.1L1187.2,708.4L1188.2,707.4L1188.9,706.2L1189.1,704.8L1189.1,701.5L1195.8,701.5L1195.8,704.8L1196.0,706.2L1196.7,707.4L1197.7,708.4L1198.9,709.1L1200.3,709.3L1202.7,709.3L1202.4,709.6L1201.6,709.5L1175.0,709.5L1173.6,709.7L1172.4,710.4L1171.4,711.4L1170.7,712.6L1170.5,714.0L1170.5,750.0L1170.6,750.9ZM1034.6,607.5L1034.6,625.1L1027.8,613.2L1026.9,611.9L1024.9,610.5L1023.3,610.0L1021.0,610.0L1023.5,607.5ZM1019.8,668.6L985.8,668.6L986.6,667.8L987.5,666.2L1014.6,666.2L1016.0,666.0L1017.2,665.3L1017.7,664.9L1018.5,667.1ZM1017.6,634.5L1017.0,634.0L1017.0,633.9L1017.6,634.4ZM984.2,618.4L983.1,617.5L981.5,616.8L980.2,616.6L980.2,590.0L980.0,588.6L979.3,587.4L978.3,586.4L977.1,585.7L975.7,585.5L953.9,585.5L952.5,585.7L951.3,586.4L950.3,587.4L949.6,588.6L949.5,589.7L949.3,588.6L948.6,587.4L947.6,586.4L946.4,585.7L945.0,585.5L943.4,585.5L943.4,578.8L945.0,578.8L946.4,578.6L947.6,577.9L948.6,576.9L949.3,575.7L949.4,574.6L949.6,575.7L950.3,576.9L951.3,577.9L952.5,578.6L953.9,578.8L975.7,578.8L977.1,578.6L978.3,577.9L979.3,576.9L980.0,575.7L980.2,574.3L980.2,570.1L982.9,570.1L1010.6,594.6L1011.6,595.4L1005.1,601.9L988.7,601.9L987.3,602.1L986.1,602.8L985.1,603.8L984.4,605.0L984.2,606.4ZM1142.0,591.3L1143.0,590.1L1144.0,591.3ZM1188.5,526.2L1189.3,524.4L1189.5,522.8L1189.4,521.7L1189.3,520.9L1188.6,519.3L1188.1,518.6L1187.0,517.5L1205.7,517.5L1207.1,517.3L1208.3,516.6L1209.3,515.6L1209.6,515.1L1210.1,515.9L1211.3,517.1L1212.0,517.6L1213.6,518.3L1215.3,518.5L1219.1,518.5L1224.5,523.9L1224.5,543.4L1224.7,545.1L1225.4,546.7L1226.0,547.5L1213.4,547.5L1213.5,530.7L1213.3,529.3L1212.6,528.1L1211.6,527.1L1210.4,526.4L1209.0,526.2ZM1177.8,487.2L1177.8,486.3L1178.4,486.6L1179.5,486.8L1178.4,486.9ZM1206.0,486.8L1207.1,486.6L1208.2,486.0L1208.5,487.7L1207.1,486.9ZM1210.2,480.9L1210.2,480.5L1210.7,480.5ZM1254.3,477.1L1254.5,476.2L1254.5,456.4L1254.3,455.0L1258.5,455.1L1258.5,476.8L1255.5,476.9ZM1225.1,462.5L1225.1,463.5L1224.1,463.5ZM1211.0,463.5L1210.2,463.5L1210.2,462.8ZM1210.2,492.4L1211.1,494.5L1211.5,495.3L1212.8,496.6L1211.3,497.3L1210.2,498.4ZM1243.4,557.0L1244.6,558.2L1244.9,558.4L1242.6,558.4ZM1309.3,558.4L1309.8,558.0L1311.2,556.5L1311.9,558.4ZM1178.8,557.5L1178.8,586.7L1179.0,588.4L1179.7,590.0L1180.8,591.3L1155.8,591.3L1156.9,590.0L1157.6,588.4L1157.7,587.6L1157.8,575.1ZM1307.1,616.7L1314.5,624.0L1313.2,625.5L1312.2,627.2L1311.1,629.8L1310.4,632.4L1310.1,635.9L1310.4,638.6L1310.9,640.6L1311.9,643.1L1313.7,646.1L1315.5,648.1L1317.6,649.9L1320.0,651.2L1322.5,652.2L1325.2,652.8L1327.6,653.0L1353.4,653.0L1355.8,652.8L1358.0,652.3L1357.7,653.3L1357.5,654.8L1357.5,661.8L1355.8,661.5L1353.4,661.3L1327.6,661.3L1324.5,661.6L1322.5,662.1L1320.0,663.1L1317.6,664.4L1316.0,665.8L1315.0,666.7L1313.2,668.8L1312.2,670.5L1311.1,672.9L1310.4,675.7L1310.1,679.2L1310.5,682.2L1309.2,682.4L1308.5,682.8L1307.1,683.8ZM1354.8,618.1L1331.9,618.0L1327.5,614.1L1324.0,610.6L1327.6,611.0L1354.8,610.9L1353.9,612.8L1353.8,613.6L1353.8,615.4L1353.9,616.2ZM1353.2,576.0L1331.4,576.0L1326.2,572.0L1331.2,568.1L1353.2,568.1L1352.2,570.0L1351.9,571.7L1351.9,572.4L1352.2,574.1ZM1310.6,597.3L1298.6,585.5L1312.1,585.5L1310.9,588.4L1310.3,591.1L1310.1,593.9L1310.3,595.9ZM1238.1,703.7L1237.1,703.3L1235.5,703.0L1233.1,703.3L1232.1,703.7L1232.1,701.5L1238.1,701.5ZM949.5,547.4L949.3,546.3L949.0,545.7L949.9,545.7L949.6,546.3ZM980.2,553.2L980.9,553.9L980.2,553.9ZM1068.2,580.4L1068.5,580.0L1068.7,580.4ZM1023.4,541.8L1023.2,541.8L1023.2,516.7L1023.0,515.3L1022.5,514.3L1022.8,513.0L1022.6,511.6L1022.0,510.3L1021.0,509.3L1019.6,508.5L1019.3,508.0L1019.5,507.5L1020.6,506.7L1021.5,505.7L1022.0,504.4L1022.0,502.7L1022.4,502.2L1023.0,501.0L1023.2,499.6L1023.2,474.2L1023.0,472.8L1022.4,471.6L1021.4,470.6L1020.1,469.9L1018.8,469.7L995.8,469.7L994.4,469.9L993.6,470.3L994.0,468.3L994.2,466.3L993.9,463.0L1030.0,463.0L1031.6,462.8L1032.8,462.5L1034.7,461.5L1036.0,460.5L1046.0,450.5L1047.0,449.2L1048.0,447.3L1048.3,446.1L1048.5,444.5L1048.5,441.0L1050.9,440.8L1052.1,440.1L1053.1,439.1L1053.8,437.9L1054.0,436.5L1054.0,431.0L1076.3,431.0L1076.3,436.8L1076.5,438.2L1077.2,439.4L1078.2,440.4L1079.4,441.1L1080.8,441.3L1083.8,441.3L1083.8,449.0L1080.8,449.0L1079.4,449.2L1078.2,449.9L1077.2,450.9L1076.5,452.1L1076.3,453.5L1076.3,479.3L1076.5,480.7L1077.2,481.9L1078.2,482.9L1079.4,483.6L1080.8,483.8L1088.8,483.8L1088.8,487.0L1089.0,488.6L1089.7,490.6L1090.3,491.7L1091.3,492.9L1102.3,503.5L1104.5,505.0L1106.5,505.6L1108.0,505.8L1125.6,505.8L1131.8,511.9L1131.8,527.6L1122.6,536.8L1120.5,536.8L1120.5,530.1L1120.3,528.7L1119.6,527.5L1118.6,526.5L1117.4,525.8L1116.0,525.6L1096.3,525.6L1094.5,523.7L1094.5,506.6L1094.3,505.1L1094.0,504.0L1093.1,502.1L1092.2,500.9L1082.2,491.1L1080.5,489.9L1079.6,489.6L1077.6,489.1L1054.5,489.1L1054.5,474.2L1054.3,472.8L1053.6,471.6L1052.6,470.6L1051.4,469.9L1050.0,469.7L1027.9,469.7L1026.5,469.9L1025.3,470.6L1024.3,471.6L1023.6,472.8L1023.4,474.2L1023.4,500.0L1023.6,501.4L1024.3,502.6L1025.3,503.6L1026.5,504.3L1027.9,504.5L1046.9,504.5L1047.6,504.9L1049.0,505.1L1073.7,505.1L1078.5,509.9L1078.5,527.0L1078.7,528.5L1079.0,529.6L1079.9,531.5L1080.8,532.6L1087.8,539.7L1087.5,541.2L1087.5,548.3L1086.4,549.4L1085.7,550.6L1085.5,552.0L1085.5,558.5L1085.7,559.9L1086.1,560.5L1085.7,561.2L1085.5,562.6L1085.5,569.5L1084.5,569.5L1084.4,540.7L1084.0,538.6L1083.0,536.7L1082.1,535.5L1069.8,523.2L1068.6,522.3L1067.5,521.7L1065.5,521.0L1064.0,520.9L1054.5,520.9L1054.5,515.4L1054.3,514.0L1053.6,512.8L1052.6,511.8L1051.4,511.1L1050.0,510.9L1027.9,510.9L1026.5,511.1L1025.3,511.8L1024.3,512.8L1023.6,514.0L1023.4,515.4ZM1130.7,489.7L1129.0,489.5L1111.3,489.5L1105.2,483.5L1105.2,482.9L1106.1,481.9L1106.8,480.7L1107.0,479.3L1107.0,453.5L1106.8,452.1L1106.1,450.9L1105.1,449.9L1103.9,449.2L1102.5,449.0L1100.2,449.0L1100.2,441.3L1102.5,441.3L1103.9,441.1L1105.1,440.4L1106.1,439.4L1106.8,438.2L1107.0,436.8L1107.0,410.6L1106.8,409.2L1106.1,408.0L1105.1,407.0L1103.9,406.3L1102.5,406.1L1080.8,406.1L1079.4,406.3L1078.2,407.0L1077.2,408.0L1076.5,409.2L1076.3,410.6L1076.3,415.2L1054.0,415.2L1054.0,410.6L1053.8,409.2L1053.1,408.0L1052.1,407.0L1050.9,406.3L1049.5,406.1L1027.9,406.1L1026.5,406.3L1025.3,407.0L1024.3,408.0L1023.6,409.2L1023.4,410.6L1023.4,436.5L1023.6,437.9L1024.3,439.1L1025.3,440.1L1026.5,440.8L1027.9,441.0L1031.5,441.0L1026.5,446.0L985.0,446.0L983.4,446.2L982.2,446.5L980.3,447.5L979.2,448.3L976.4,448.1L946.0,448.1L943.5,448.3L944.6,446.1L944.7,445.3L944.7,443.5L944.6,442.7L943.5,440.5L946.0,440.7L976.4,440.7L979.5,440.4L982.2,439.7L984.2,438.9L986.6,437.5L989.2,435.2L990.6,433.6L992.0,431.4L992.0,436.0L992.2,437.4L992.9,438.6L993.9,439.6L995.1,440.3L996.5,440.5L1018.8,440.5L1020.1,440.3L1021.4,439.6L1022.4,438.6L1023.0,437.4L1023.2,436.0L1023.2,410.4L1023.0,409.0L1022.4,407.8L1021.4,406.8L1020.1,406.1L1018.8,405.9L1009.3,405.9L1009.3,396.4L1016.4,389.3L1119.0,389.3L1119.0,393.7L1119.2,395.1L1119.9,396.3L1120.9,397.3L1122.1,398.0L1123.5,398.2L1145.7,398.2L1147.1,398.0L1148.3,397.3L1149.3,396.3L1150.0,395.1L1150.2,393.7L1150.2,389.5L1150.8,390.1L1150.8,394.0L1151.0,395.4L1151.7,396.6L1152.7,397.6L1153.9,398.3L1155.5,398.5L1155.6,403.7L1155.7,404.5L1156.4,406.1L1156.9,406.8L1158.1,408.0L1158.8,408.5L1160.4,409.1L1162.3,409.3L1161.9,410.0L1161.7,411.4L1161.7,415.8L1139.3,415.8L1139.3,411.4L1139.1,410.0L1138.4,408.8L1137.4,407.8L1136.2,407.1L1134.8,406.9L1113.0,406.9L1111.6,407.1L1110.4,407.8L1109.4,408.8L1108.7,410.0L1108.5,411.4L1108.5,436.6L1108.7,438.0L1109.4,439.2L1110.4,440.2L1111.6,440.9L1113.0,441.1L1134.9,441.1L1134.3,442.6L1134.1,444.1L1134.1,449.2L1112.3,449.2L1110.9,449.4L1109.7,450.1L1108.7,451.1L1108.0,452.3L1107.8,453.7L1107.8,478.2L1108.0,479.6L1108.7,480.8L1109.7,481.8L1110.9,482.5L1112.3,482.7L1132.9,482.7L1131.6,484.1L1131.2,484.8L1130.6,486.6L1130.5,487.5ZM1139.3,433.1L1139.3,432.2L1140.2,432.2L1139.4,433.0ZM1160.8,432.2L1161.7,432.2L1161.7,433.1L1161.6,433.0ZM1150.2,371.5L1150.2,368.4L1149.9,366.9L1150.8,367.4L1150.8,370.9ZM990.5,409.4L991.7,408.8L992.7,407.9L992.2,409.4ZM1076.8,372.7L1077.8,371.6L1078.2,370.8L1078.2,372.7ZM922.0,578.8L924.8,578.8L924.8,585.5L922.0,585.5L922.6,584.1L922.9,582.5L922.6,580.2ZM917.3,593.3L917.3,595.8L907.4,595.8L907.4,593.4L909.3,594.9L910.1,595.3L911.9,595.6L912.7,595.6L914.5,595.3L915.3,594.9L916.8,593.8ZM876.4,588.8L876.1,589.3L875.9,590.7L875.9,616.6L876.2,618.1L875.5,618.0L874.3,618.0L874.5,617.6L874.7,616.2L874.7,590.0L874.5,588.7ZM830.0,579.4L829.2,579.4L829.2,578.6L829.5,579.0ZM821.3,571.6L820.1,571.6L820.1,570.4L820.7,571.1ZM820.1,561.6L820.1,560.4L821.3,560.4L820.7,560.9ZM827.0,530.0L826.1,529.5L825.0,529.3L826.1,529.2L827.0,528.7ZM821.3,498.9L820.1,498.9L820.1,497.7L820.7,498.4ZM820.1,487.9L820.1,486.7L821.3,486.7L820.7,487.2ZM827.0,456.3L826.1,455.8L825.3,455.7L826.1,455.6L827.0,455.1ZM821.3,424.0L819.6,424.0L819.6,422.4L820.7,423.5ZM798.1,455.7L797.6,455.8L796.5,456.4L796.4,455.2L797.1,455.6ZM801.8,424.0L802.3,423.6L803.4,422.4L803.4,424.0ZM803.0,486.7L804.3,486.7L804.3,487.9L803.3,486.9ZM804.3,497.7L804.3,498.9L803.0,498.9L803.3,498.7ZM796.7,528.7L797.6,529.2L798.7,529.3L797.6,529.5L796.7,530.0ZM803.0,560.4L804.3,560.4L804.3,561.6L803.3,560.6ZM804.3,570.4L804.3,571.6L803.0,571.6L803.3,571.4ZM796.7,602.7L797.6,603.2L798.7,603.3L797.6,603.5L796.7,604.0ZM825.0,603.3L826.1,603.2L827.0,602.7L827.0,604.0L826.1,603.5ZM829.2,597.8L829.2,597.4L829.6,597.4ZM907.4,613.9L907.4,612.2L909.6,612.2L907.8,613.5ZM915.0,612.2L917.3,612.2L917.3,614.0L916.8,613.5ZM821.5,635.5L820.4,636.3L820.1,636.8L820.1,635.5ZM820.1,644.9L820.4,645.4L821.5,646.2L820.1,646.2ZM827.0,676.7L827.0,677.9L826.1,677.4L825.3,677.3L826.1,677.2ZM798.1,677.3L797.1,677.4L796.4,677.8L796.5,676.6L797.6,677.2ZM802.2,646.2L803.3,645.4L804.3,643.9L804.3,646.2ZM804.3,637.8L803.3,636.3L802.2,635.5L804.3,635.5ZM801.8,709.2L803.4,709.2L803.4,710.8L802.3,709.6ZM819.6,710.8L819.6,709.2L821.3,709.2L820.7,709.7ZM1117.5,814.8L1118.0,813.5L1118.2,811.6L1118.0,810.7L1117.4,808.9L1116.7,807.9L1121.6,812.7L1124.3,814.7ZM1097.7,788.8L1095.5,786.6L1095.5,782.0L1095.8,784.5L1096.1,785.7L1096.9,787.5ZM864.8,713.5L866.2,713.5L866.2,714.9L864.9,713.6ZM866.2,743.4L866.2,744.8L864.8,744.8L866.2,743.5ZM864.8,779.0L866.2,779.0L866.2,780.4L864.9,779.1ZM890.7,787.5L882.8,787.5L882.8,779.0L889.8,779.0L889.0,780.5L888.8,781.3L888.6,783.2L888.8,784.1L889.4,785.8L889.8,786.6ZM884.2,744.8L882.8,744.8L882.8,743.4L884.1,744.7ZM882.8,714.9L882.8,713.5L884.2,713.5L882.8,714.8ZM894.5,686.9L894.5,686.7L895.1,686.3L894.6,686.8ZM938.7,686.0L939.2,686.0L939.2,686.5ZM979.7,686.0L980.8,686.0L980.8,690.2L979.7,690.2ZM980.8,711.5L979.9,711.3L979.1,711.2L979.5,710.4L979.7,709.0L979.7,707.4L980.8,707.4ZM1052.4,618.2L1052.6,618.2L1052.4,618.4Z" fill="none" stroke="#ff2a2a" stroke-width="0.95" stroke-linejoin="round"/>
<path d="M1051.7,534.3L1061.8,534.3L1071.0,543.5L1071.0,577.6L1071.1,578.8L1071.6,580.1L1072.7,581.5L1073.8,582.3L1074.7,582.7L1076.3,582.9L1115.0,582.9L1115.0,583.2L1018.0,583.2L989.5,558.0L988.6,557.4L987.5,556.9L986.2,556.7L977.4,556.7L977.4,547.7L977.1,546.7L976.7,546.3L975.7,546.0L953.9,546.0L952.9,546.3L952.5,546.7L952.2,547.7L952.3,574.8L952.9,575.7L953.9,576.0L976.2,575.9L977.1,575.3L977.4,574.3L977.4,567.3L984.0,567.3L1012.5,592.5L1013.7,593.3L1014.9,593.7L1015.8,593.8L1116.7,593.8L1117.7,593.5L1118.3,592.7L1118.4,590.4L1137.4,590.5L1139.1,590.0L1140.3,589.1L1141.0,587.8L1141.1,587.0L1141.2,569.1L1141.4,568.1L1173.9,533.9L1174.8,534.6L1176.2,534.9L1177.7,534.8L1178.9,534.0L1179.8,532.9L1180.1,532.3L1180.4,529.6L1180.9,528.5L1181.5,527.6L1182.4,527.0L1184.4,526.2L1185.5,525.5L1186.3,524.4L1186.5,523.8L1186.7,522.6L1186.5,521.5L1185.8,520.2L1185.3,519.7L1184.0,519.0L1182.9,518.8L1179.9,518.8L1178.3,518.6L1176.9,518.0L1175.7,517.1L1174.8,515.9L1174.2,514.5L1174.0,512.9L1174.0,491.3L1174.2,489.7L1174.8,488.2L1175.1,487.1L1174.9,485.6L1174.2,483.8L1174.0,482.2L1174.0,460.6L1174.2,459.0L1174.8,457.6L1175.7,456.4L1176.9,455.5L1178.3,454.9L1179.9,454.7L1205.6,454.7L1207.2,454.9L1208.6,455.5L1209.8,456.4L1210.7,457.6L1211.9,460.4L1212.8,461.4L1213.4,461.8L1215.0,462.2L1220.0,462.2L1221.7,461.7L1222.9,460.8L1223.6,459.5L1224.0,454.9L1224.6,453.5L1225.5,452.3L1226.7,451.4L1228.1,450.8L1229.7,450.6L1249.9,450.6L1251.5,450.8L1253.9,452.0L1255.1,452.2L1265.8,452.3L1265.8,452.7L1262.5,452.8L1261.6,453.4L1261.3,454.4L1261.4,478.0L1261.6,478.5L1262.5,479.1L1265.8,479.2L1265.8,479.6L1256.0,479.7L1254.8,479.9L1252.9,481.2L1251.5,481.8L1249.9,482.0L1214.4,481.9L1213.1,482.3L1211.9,483.1L1211.5,483.8L1211.0,485.2L1211.2,486.9L1213.3,492.7L1214.4,494.3L1215.7,495.0L1216.9,495.2L1226.9,495.2L1227.9,495.5L1244.5,512.1L1244.8,513.1L1244.8,552.9L1245.0,554.1L1245.7,555.4L1246.8,556.3L1247.4,556.5L1248.5,556.7L1305.7,556.7L1306.9,556.5L1307.5,556.2L1308.7,555.2L1309.3,553.9L1309.4,552.7L1309.3,550.6L1309.5,547.7L1310.2,544.9L1311.3,542.3L1312.8,539.8L1314.6,537.6L1316.8,535.8L1319.3,534.3L1322.7,533.0L1323.9,532.3L1324.8,531.2L1325.2,529.8L1325.2,529.0L1324.8,527.6L1323.9,526.5L1322.7,525.8L1319.3,524.5L1316.8,523.0L1314.6,521.2L1312.8,519.0L1311.3,516.5L1310.2,513.9L1309.5,511.1L1309.3,508.2L1309.5,505.3L1310.2,502.5L1311.3,499.9L1312.8,497.4L1314.6,495.2L1316.8,493.4L1319.3,491.9L1321.9,490.8L1324.7,490.1L1327.7,489.9L1353.3,489.9L1356.3,490.1L1359.1,490.8L1361.7,491.9L1364.2,493.4L1366.4,495.2L1368.9,498.2L1370.1,499.2L1413.0,542.1L1415.1,544.8L1416.4,547.9L1416.8,551.3L1416.8,719.4L1416.4,722.8L1415.1,725.9L1413.0,728.6L1329.1,812.5L1326.4,814.6L1323.3,815.9L1319.9,816.3L1192.4,816.8L1191.3,817.0L1190.7,817.2L1189.5,818.2L1188.8,819.4L1188.6,820.6L1188.6,849.2L1188.8,850.3L1189.5,851.6L1190.0,852.1L1191.3,852.8L1192.4,853.0L1236.8,853.0L1238.5,854.8L1239.5,855.5L1244.0,857.5L1245.2,857.8L1247.0,857.5L1251.2,855.7L1252.5,854.8L1254.2,853.0L1448.1,853.0L1449.9,852.5L1450.8,851.9L1451.8,850.8L1452.5,849.6L1452.7,848.4L1452.7,299.3L1452.2,297.6L1451.3,296.4L1450.0,295.7L1448.9,295.5L1148.5,295.5L1147.4,295.7L1146.1,296.4L1145.6,296.9L1144.9,298.2L1144.7,299.3L1144.7,309.4L1143.7,309.4L1143.7,283.4L1143.4,282.4L1143.0,282.0L1142.0,281.7L1116.1,281.7L1115.1,282.0L1114.7,282.4L1114.4,283.4L1114.4,352.0L1114.7,353.0L1115.6,353.6L1116.1,353.7L1142.0,353.7L1143.0,353.4L1143.4,353.0L1143.7,352.0L1143.7,325.8L1144.7,325.8L1144.7,355.3L1145.0,356.7L1145.5,357.5L1149.7,363.3L1150.7,364.2L1151.4,364.6L1152.8,364.9L1158.0,364.9L1158.0,365.3L1154.8,365.4L1153.9,366.0L1153.6,367.0L1153.6,372.5L1152.4,373.2L1151.9,373.7L1151.2,375.0L1151.1,375.8L1151.1,385.2L1151.2,386.0L1151.9,387.3L1152.4,387.8L1153.6,388.5L1153.7,394.5L1153.9,395.0L1154.8,395.6L1158.0,395.7L1158.3,397.4L1158.3,402.8L1158.5,403.9L1159.2,405.2L1159.7,405.7L1161.0,406.4L1162.4,406.5L1163.5,406.3L1164.7,405.8L1166.3,405.6L1189.3,405.6L1190.9,405.8L1192.3,406.4L1193.5,407.2L1194.6,407.7L1195.6,407.9L1200.9,407.9L1200.9,408.3L1197.0,408.4L1196.1,409.0L1195.8,410.0L1195.9,438.5L1196.1,439.0L1197.0,439.6L1200.9,439.7L1200.9,440.1L1195.6,440.1L1194.6,440.3L1193.5,440.8L1192.3,441.6L1190.9,442.2L1189.3,442.4L1166.3,442.4L1164.7,442.2L1163.3,441.6L1162.1,440.7L1161.2,439.5L1160.6,438.1L1160.4,436.6L1159.8,435.3L1158.9,434.3L1158.3,434.0L1156.7,433.6L1144.0,433.6L1142.7,434.0L1142.1,434.3L1141.2,435.3L1140.6,436.6L1140.4,438.1L1139.8,439.5L1138.9,440.7L1137.6,442.0L1137.0,443.4L1136.9,457.8L1136.5,457.8L1136.4,453.2L1136.2,452.7L1135.3,452.1L1112.3,452.0L1111.8,452.1L1110.9,452.7L1110.6,453.7L1110.6,478.2L1110.9,479.2L1111.8,479.8L1112.3,479.9L1135.3,479.8L1136.2,479.2L1136.4,478.7L1136.5,474.1L1136.9,474.1L1136.9,484.0L1135.2,484.5L1134.0,485.5L1133.4,486.9L1133.3,487.8L1133.6,489.3L1134.5,490.6L1135.4,491.3L1146.2,502.0L1147.8,504.0L1148.7,506.2L1149.0,508.6L1149.0,530.9L1148.7,533.3L1147.8,535.5L1146.2,537.5L1132.4,551.2L1130.5,552.7L1128.3,553.6L1123.5,554.1L1122.9,554.3L1121.7,555.2L1121.0,556.5L1120.6,560.1L1120.8,562.7L1120.8,569.9L1120.6,571.4L1120.1,572.7L1119.3,573.8L1118.4,574.4L1118.3,573.4L1118.1,573.0L1117.7,572.6L1116.7,572.3L1081.6,572.3L1081.6,541.3L1081.5,540.1L1081.0,538.8L1080.1,537.5L1067.8,525.2L1066.5,524.3L1065.2,523.8L1064.0,523.7L1051.7,523.7L1051.7,515.4L1051.4,514.4L1050.5,513.8L1027.9,513.7L1026.9,514.0L1026.5,514.4L1026.2,515.4L1026.2,542.5L1026.5,543.5L1026.9,543.9L1027.9,544.2L1050.5,544.1L1051.4,543.5L1051.7,542.5ZM1287.0,452.3L1287.0,457.8L1286.6,457.8L1286.6,454.4L1286.3,453.4L1285.4,452.8L1282.1,452.7L1282.1,452.3ZM1286.6,474.1L1287.0,474.1L1287.0,479.6L1282.1,479.6L1282.1,479.2L1285.4,479.1L1286.3,478.5L1286.6,477.5ZM1222.8,407.9L1222.8,415.8L1222.4,415.8L1222.4,410.0L1222.1,409.0L1221.2,408.4L1220.7,408.3L1217.3,408.3L1217.3,407.9ZM1222.4,432.2L1222.8,432.2L1222.8,440.1L1217.3,440.1L1217.3,439.7L1220.7,439.7L1221.2,439.6L1222.1,439.0L1222.4,438.0ZM1174.3,365.3L1174.3,364.9L1179.1,364.9L1179.1,372.3L1178.7,372.3L1178.7,367.0L1178.4,366.0L1177.5,365.4ZM1178.7,388.7L1179.1,388.7L1179.1,396.1L1174.3,396.1L1174.3,395.7L1177.5,395.6L1178.4,395.0L1178.7,394.0ZM1103.3,710.3L1099.5,710.4L1098.6,711.0L1098.3,712.0L1098.3,782.0L1098.6,784.2L1099.5,786.4L1101.1,788.5L1123.6,810.7L1125.7,812.3L1127.9,813.1L1130.0,813.4L1320.0,812.7L1322.2,812.4L1324.4,811.5L1326.5,810.0L1410.5,726.0L1411.8,724.3L1412.8,722.1L1413.2,719.5L1413.2,551.2L1412.9,549.0L1412.0,546.8L1410.5,544.7L1367.5,501.7L1365.8,500.4L1365.2,499.5L1363.7,497.7L1361.9,496.3L1359.9,495.1L1357.8,494.2L1355.6,493.7L1353.5,493.5L1327.6,493.5L1325.4,493.7L1322.9,494.3L1320.8,495.2L1319.1,496.3L1317.3,497.7L1315.8,499.5L1314.5,501.7L1313.7,503.5L1313.1,505.8L1312.9,508.1L1313.1,510.4L1313.6,512.6L1314.5,514.7L1315.8,516.9L1317.3,518.7L1319.1,520.1L1321.1,521.3L1323.2,522.2L1325.4,522.7L1327.6,522.9L1353.5,522.9L1355.6,522.7L1357.8,522.2L1360.7,520.9L1394.8,555.0L1394.8,715.7L1316.2,794.3L1133.7,795.0L1116.7,778.2L1116.7,761.7L1117.5,761.6L1118.0,761.4L1118.6,760.5L1118.7,750.3L1125.5,750.2L1126.4,749.6L1126.7,748.6L1126.6,711.5L1126.0,710.6L1125.0,710.3L1112.9,710.3L1112.6,709.1L1112.3,708.4L1110.8,706.3L1109.7,705.4L1108.3,705.0L1106.8,705.2L1106.2,705.4L1105.1,706.3L1103.6,709.1ZM1365.4,670.3L1363.9,668.5L1361.9,666.9L1360.2,665.8L1358.1,664.9L1355.6,664.3L1353.4,664.1L1327.5,664.1L1325.4,664.3L1323.2,664.8L1321.1,665.7L1318.9,667.0L1317.1,668.5L1315.7,670.3L1314.5,672.3L1313.7,674.1L1313.1,676.4L1312.9,678.9L1313.2,681.4L1313.7,683.5L1314.5,685.3L1315.8,687.5L1317.3,689.3L1319.1,690.7L1321.1,691.9L1323.2,692.8L1325.4,693.3L1327.6,693.5L1334.0,693.5L1334.0,693.9L1327.7,693.9L1325.2,693.7L1322.9,693.2L1320.7,692.3L1318.7,691.0L1316.9,689.5L1315.4,687.7L1314.5,686.4L1313.4,685.4L1311.9,684.9L1310.4,685.0L1309.6,685.4L1308.5,686.4L1307.8,687.8L1307.6,689.2L1306.8,691.4L1305.4,693.3L1293.5,705.6L1291.6,707.2L1289.4,708.1L1286.9,708.4L1273.8,708.5L1272.6,708.7L1270.5,709.7L1269.1,709.9L1242.7,709.9L1241.3,709.7L1240.0,709.2L1239.0,708.4L1237.9,707.0L1236.8,706.2L1236.1,705.9L1234.7,705.8L1234.1,705.9L1232.9,706.5L1231.2,708.4L1230.2,709.2L1228.9,709.7L1227.5,709.9L1207.2,710.0L1205.8,710.4L1205.1,710.8L1204.6,711.3L1203.9,712.6L1203.7,713.7L1203.7,723.8L1203.3,723.8L1203.3,714.0L1203.0,713.0L1202.1,712.4L1174.5,712.4L1173.6,713.0L1173.3,714.0L1173.3,750.0L1173.6,751.0L1174.5,751.6L1180.3,751.7L1180.3,753.7L1124.1,753.7L1123.0,753.9L1122.4,754.2L1121.2,755.1L1120.5,756.4L1120.3,757.5L1120.3,775.1L1120.8,776.8L1121.5,777.7L1134.1,790.3L1135.7,791.2L1136.8,791.3L1313.1,790.7L1314.8,790.3L1315.8,789.6L1390.1,715.3L1391.0,713.8L1391.2,712.6L1391.2,558.1L1391.0,556.9L1390.1,555.4L1377.5,542.9L1376.6,542.2L1375.3,541.8L1373.9,541.9L1372.7,542.5L1371.7,543.4L1371.4,544.0L1371.1,545.3L1371.5,547.7L1371.7,550.6L1371.5,553.5L1370.8,556.3L1369.7,558.9L1368.2,561.4L1366.4,563.6L1364.2,565.4L1361.7,566.9L1359.1,568.0L1357.3,568.5L1356.0,569.2L1355.1,570.3L1354.7,571.7L1354.8,573.1L1355.1,573.8L1356.0,574.9L1357.3,575.6L1359.1,576.1L1361.7,577.2L1364.2,578.7L1366.4,580.5L1368.2,582.7L1369.7,585.2L1370.8,587.8L1371.5,590.6L1371.7,593.5L1371.5,596.4L1370.8,599.2L1369.7,601.8L1368.2,604.3L1366.4,606.5L1364.2,608.3L1361.7,609.8L1358.8,611.0L1357.9,611.6L1357.0,612.8L1356.6,614.2L1356.7,615.6L1357.0,616.2L1357.9,617.4L1358.8,618.0L1361.7,619.2L1364.2,620.7L1366.4,622.5L1368.2,624.7L1369.7,627.2L1370.8,629.8L1371.5,632.6L1371.7,635.5L1371.5,638.4L1370.8,641.2L1369.7,643.8L1368.2,646.3L1366.4,648.5L1364.2,650.3L1362.1,651.6L1361.4,652.2L1360.7,653.3L1360.4,654.5L1360.3,663.3L1360.5,664.2L1361.4,665.8L1364.1,668.1L1365.9,670.3ZM1355.8,693.7L1353.3,693.9L1347.0,693.9L1347.0,693.5L1353.5,693.5L1355.8,693.3L1358.1,692.7L1360.2,691.8L1361.9,690.7L1363.9,689.1L1365.4,687.2L1366.0,687.2L1364.1,689.5L1362.3,691.0L1360.3,692.3L1358.1,693.2ZM1203.7,740.2L1203.7,752.1L1196.5,752.1L1196.5,751.7L1201.6,751.7L1202.6,751.4L1203.0,751.0L1203.3,750.0L1203.3,740.2ZM1186.9,590.4L1186.9,592.0L1187.2,593.0L1187.6,593.4L1188.6,593.7L1287.8,593.7L1318.6,624.0L1317.1,625.2L1315.7,627.0L1314.5,629.0L1313.7,630.8L1313.1,633.3L1312.9,635.4L1313.1,637.7L1313.7,640.2L1314.5,642.0L1315.7,644.0L1317.3,646.0L1319.1,647.4L1320.8,648.5L1323.2,649.5L1325.4,650.0L1327.5,650.2L1353.4,650.2L1355.8,650.0L1357.8,649.5L1359.9,648.6L1361.9,647.4L1363.7,646.0L1365.3,644.0L1366.5,642.0L1367.4,639.9L1367.9,637.7L1368.1,635.4L1367.9,633.1L1367.3,630.8L1366.4,628.7L1365.2,626.8L1363.9,625.2L1362.1,623.7L1360.2,622.5L1358.1,621.6L1355.6,621.0L1353.4,620.8L1330.9,620.8L1325.6,616.2L1293.7,584.7L1292.8,583.9L1291.6,583.4L1290.0,583.1L1190.3,583.1L1190.3,582.7L1317.8,582.7L1315.7,585.0L1314.5,587.0L1313.7,588.8L1313.1,591.1L1312.9,593.4L1313.1,595.9L1313.7,598.2L1314.5,600.0L1315.8,602.2L1317.3,604.0L1319.1,605.4L1321.1,606.6L1322.9,607.4L1325.2,608.0L1327.6,608.2L1353.4,608.2L1355.8,608.0L1357.8,607.5L1359.9,606.6L1362.1,605.3L1363.9,603.8L1365.2,602.2L1366.5,600.0L1367.3,598.2L1367.9,595.9L1368.1,593.6L1367.9,591.3L1367.3,588.8L1366.4,586.7L1365.2,584.8L1363.9,583.2L1362.1,581.7L1360.2,580.5L1357.8,579.5L1355.6,579.0L1353.5,578.8L1330.4,578.8L1323.2,573.2L1322.1,572.6L1321.0,572.2L1190.3,572.1L1190.3,571.8L1320.2,571.8L1321.3,571.6L1323.1,570.8L1330.2,565.3L1353.4,565.3L1355.8,565.1L1358.1,564.5L1359.9,563.7L1361.9,562.5L1363.9,560.9L1365.3,559.1L1366.5,557.1L1367.3,555.3L1367.9,552.8L1368.1,550.5L1367.9,548.2L1367.3,545.9L1366.5,544.1L1365.3,542.1L1363.9,540.3L1362.1,538.8L1359.9,537.5L1357.8,536.6L1355.6,536.1L1353.5,535.9L1327.6,535.9L1325.4,536.1L1323.2,536.6L1321.1,537.5L1319.1,538.7L1317.3,540.1L1315.8,541.9L1314.6,543.8L1313.7,545.9L1313.1,548.2L1312.9,550.5L1313.1,552.8L1313.6,555.0L1314.5,557.1L1315.7,559.1L1317.5,561.2L1190.3,561.2L1190.3,560.9L1232.0,560.9L1233.0,560.6L1233.4,560.2L1233.7,559.2L1233.7,558.0L1237.5,558.1L1238.6,557.9L1239.9,557.2L1240.8,556.0L1241.2,554.3L1241.2,515.3L1241.0,514.2L1240.1,512.6L1227.4,499.9L1225.8,499.0L1224.7,498.8L1215.3,498.8L1214.2,499.0L1212.9,499.7L1212.0,500.8L1211.6,502.2L1211.5,511.9L1212.0,513.6L1212.9,514.8L1213.6,515.2L1215.3,515.7L1220.3,515.7L1227.3,522.7L1227.4,543.7L1227.5,544.5L1228.2,545.8L1229.4,546.7L1230.3,547.0L1230.3,550.3L1188.6,550.3L1187.6,550.6L1187.1,551.4L1185.4,551.3L1184.3,551.5L1183.0,552.2L1182.1,553.4L1181.6,555.1L1181.7,587.0L1181.8,587.8L1182.5,589.1L1183.7,590.0L1185.1,590.4ZM1006.3,604.7L988.7,604.7L987.7,605.0L987.3,605.4L987.0,606.4L987.0,631.6L987.3,632.6L987.7,633.0L988.7,633.3L1013.2,633.3L1014.2,633.0L1014.6,632.6L1014.9,631.6L1014.9,612.1L1022.3,604.7L1280.8,604.7L1293.7,617.6L1293.7,684.9L1284.8,694.2L1270.9,694.2L1270.9,682.3L1270.6,681.3L1270.2,680.9L1269.2,680.6L1242.1,680.7L1241.6,680.9L1241.0,681.8L1240.9,687.3L1229.3,687.3L1229.2,681.8L1228.6,680.9L1227.6,680.6L1199.8,680.7L1199.3,680.9L1198.7,681.8L1198.6,687.3L1186.3,687.3L1186.2,681.8L1186.0,681.3L1185.1,680.7L1158.7,680.6L1157.7,680.9L1157.3,681.3L1157.0,682.3L1157.1,705.3L1157.7,706.2L1158.7,706.5L1185.1,706.4L1186.0,705.8L1186.3,704.8L1186.3,698.7L1198.6,698.7L1198.7,705.3L1199.3,706.2L1200.3,706.5L1228.1,706.4L1229.0,705.8L1229.3,704.8L1229.3,698.7L1240.9,698.7L1241.0,705.3L1241.6,706.2L1242.6,706.5L1269.2,706.5L1270.2,706.2L1270.6,705.8L1270.9,704.8L1287.2,704.8L1288.2,704.6L1289.5,704.1L1290.8,703.1L1302.8,690.6L1303.5,689.8L1304.0,688.5L1304.3,687.0L1304.3,615.4L1304.1,614.3L1303.7,613.0L1302.7,611.7L1286.7,595.7L1285.8,595.0L1284.6,594.4L1283.0,594.1L1019.0,594.1L1017.4,594.4L1016.6,594.7L1015.4,595.5ZM869.1,747.6L859.9,747.6L858.9,747.9L858.5,748.3L858.2,749.3L858.3,775.0L858.9,775.9L859.9,776.2L869.1,776.2L869.1,790.3L868.3,790.4L867.8,790.6L867.4,791.0L867.1,792.0L867.2,817.1L867.8,818.0L868.8,818.3L892.5,818.2L893.4,817.6L893.7,816.6L893.6,791.5L893.0,790.6L892.0,790.3L879.9,790.3L879.9,776.2L890.0,776.2L891.0,775.9L891.4,775.5L891.7,774.5L891.6,748.8L891.0,747.9L890.0,747.6L879.9,747.6L879.9,710.7L890.0,710.7L891.0,710.4L891.6,709.5L891.7,685.2L894.7,683.2L1046.2,683.2L1046.2,688.4L1045.5,689.7L1045.3,690.8L1045.3,712.3L1045.2,713.6L1044.7,714.8L1043.9,715.8L1042.9,716.6L1041.7,717.1L1040.4,717.2L1016.7,717.2L1015.4,717.1L1014.0,716.5L1012.9,716.2L1011.4,716.4L1009.7,717.1L1008.4,717.2L985.4,717.2L984.1,717.1L982.9,716.6L980.6,714.6L979.1,714.0L978.4,714.0L976.7,714.4L975.1,714.6L943.8,714.6L942.2,714.4L940.9,713.9L939.7,713.0L938.8,711.8L938.3,710.5L938.1,708.9L938.1,690.8L937.6,689.1L936.7,687.9L936.0,687.5L934.3,687.0L899.8,687.0L898.1,687.5L896.9,688.4L896.5,689.1L896.1,690.5L896.0,708.9L895.8,710.6L895.2,712.0L894.3,713.3L893.0,714.2L891.6,714.8L889.9,715.0L887.7,715.1L886.3,715.5L885.2,716.4L884.5,717.7L884.3,718.8L884.3,739.5L884.7,741.2L885.6,742.4L886.9,743.1L891.6,743.5L893.0,744.1L894.3,745.0L895.2,746.3L895.8,747.7L896.0,749.4L896.0,774.4L895.8,776.1L895.2,777.5L894.3,778.8L892.9,779.8L892.1,780.7L891.5,782.1L891.4,782.8L891.8,784.4L892.7,785.6L893.7,786.3L895.0,786.8L897.3,788.7L898.9,789.2L902.0,789.3L902.0,789.7L896.5,789.8L895.6,790.4L895.3,791.4L895.4,817.8L895.6,818.3L896.5,818.9L902.0,819.0L902.0,819.4L899.2,819.4L897.9,819.7L897.2,820.0L895.0,821.8L893.6,822.4L891.9,822.6L868.9,822.6L867.2,822.4L865.8,821.8L864.5,820.9L863.6,819.6L863.0,818.2L862.8,816.5L862.8,792.1L863.0,790.4L864.6,787.2L864.7,786.2L864.7,784.0L864.3,782.6L863.8,781.9L862.7,781.0L861.3,780.6L858.3,780.3L856.9,779.7L855.6,778.8L854.7,777.5L854.1,776.1L853.9,774.4L853.9,749.4L854.1,747.7L854.7,746.3L855.6,745.0L856.9,744.1L858.3,743.5L861.3,743.2L862.7,742.8L863.8,741.9L864.5,740.6L864.7,739.5L864.7,718.8L864.3,717.1L863.4,715.9L862.1,715.2L858.3,714.8L856.9,714.2L855.6,713.3L854.7,712.0L854.1,710.6L853.9,708.9L853.9,684.6L854.1,682.9L854.7,681.5L855.6,680.2L856.9,679.3L858.3,678.7L860.0,678.5L872.2,678.5L873.8,678.1L887.6,669.2L890.3,668.0L893.1,667.6L981.7,667.5L983.1,667.1L983.8,666.7L984.3,666.2L985.0,664.9L985.2,663.8L985.2,657.9L985.6,657.9L985.7,662.2L985.9,662.7L986.8,663.3L1014.6,663.4L1015.6,663.1L1016.0,662.7L1016.3,661.7L1016.3,637.8L1016.0,636.8L1015.6,636.4L1014.6,636.1L987.3,636.1L986.3,636.4L985.7,637.3L985.6,641.6L985.2,641.6L985.1,636.3L984.9,635.1L983.8,632.9L983.6,631.5L983.6,623.2L983.1,621.5L982.2,620.3L981.5,619.9L980.1,619.5L972.7,619.4L972.7,619.0L976.2,618.9L977.1,618.3L977.4,617.3L977.4,590.0L977.1,589.0L976.2,588.4L953.9,588.3L952.9,588.6L952.5,589.0L952.2,590.0L952.2,617.3L952.5,618.3L953.4,618.9L956.8,619.0L956.8,619.4L952.5,619.4L951.2,619.7L950.5,620.0L949.1,621.4L947.9,622.3L946.5,622.9L944.9,623.1L921.9,623.1L920.3,622.9L918.9,622.3L917.7,621.4L916.8,620.2L916.2,618.8L916.0,617.4L915.3,616.0L914.2,615.0L912.7,614.5L911.2,614.6L910.4,615.0L909.3,616.0L908.9,616.6L907.9,619.5L907.0,620.7L905.8,621.6L904.4,622.2L902.8,622.4L880.5,622.4L878.9,622.2L876.2,620.9L875.5,620.8L873.9,620.9L871.7,621.8L870.1,622.0L847.7,622.0L846.1,621.8L844.7,621.2L843.5,620.3L842.6,619.1L842.0,617.7L841.8,616.1L841.8,605.1L841.5,603.9L841.3,603.3L840.5,602.3L837.2,599.4L835.8,598.6L834.0,598.4L832.8,598.6L831.6,599.3L830.6,600.5L830.0,601.9L829.8,603.0L829.9,604.5L830.6,606.2L830.8,607.9L830.8,630.9L830.6,632.6L830.0,634.1L829.0,635.3L827.8,636.3L826.3,636.9L824.7,637.1L823.6,637.5L822.4,638.4L821.6,639.8L821.5,641.3L822.0,642.7L823.0,643.9L824.4,644.5L826.3,644.8L827.8,645.4L829.0,646.4L830.0,647.6L830.6,649.1L830.8,650.8L830.8,672.8L830.6,674.5L829.9,676.2L829.8,677.6L830.0,678.7L830.6,680.1L830.8,681.8L830.8,704.6L830.6,706.3L830.0,707.8L829.0,709.0L827.8,710.0L826.3,710.6L824.3,710.9L823.0,711.4L822.0,712.3L821.4,713.5L821.3,714.6L821.3,761.9L820.9,764.5L820.0,766.9L818.3,769.0L810.9,776.4L810.3,777.3L809.9,778.7L809.8,796.1L809.6,797.9L808.9,799.5L807.9,800.8L806.0,802.5L805.4,803.7L805.3,804.3L805.4,805.7L806.0,806.9L807.9,808.6L808.9,809.9L809.6,811.5L809.8,813.3L809.8,838.8L809.6,840.6L808.9,842.2L807.9,843.5L806.6,844.5L804.7,845.5L803.8,846.7L803.3,848.4L803.4,849.5L803.8,850.9L804.7,852.1L805.4,852.5L807.1,853.0L1108.4,853.0L1109.5,852.8L1110.1,852.5L1111.3,851.6L1112.0,850.3L1112.1,849.5L1112.2,819.3L1112.4,817.7L1113.0,816.3L1114.7,814.2L1115.1,813.5L1115.3,812.7L1115.2,811.1L1115.0,810.4L1114.3,809.4L1093.5,788.6L1092.8,787.4L1092.7,714.6L1092.2,712.9L1091.3,711.7L1090.6,711.3L1089.2,710.9L1073.4,710.8L1071.8,710.6L1070.4,710.0L1069.2,709.1L1068.3,707.9L1067.7,706.5L1067.5,704.9L1067.5,682.5L1067.7,680.7L1067.7,674.0L1069.9,673.9L1070.8,673.3L1071.1,672.4L1071.1,667.7L1071.5,667.7L1071.6,672.9L1072.2,673.7L1073.2,674.0L1100.2,673.9L1100.7,673.7L1101.3,672.9L1101.4,667.7L1101.8,667.7L1101.9,672.9L1102.5,673.7L1103.5,674.0L1112.8,674.0L1113.8,673.7L1114.2,673.3L1114.5,672.4L1114.5,667.7L1114.9,667.7L1115.0,672.9L1115.6,673.7L1116.6,674.0L1142.6,673.9L1143.1,673.7L1143.7,672.9L1143.8,667.7L1144.2,667.7L1144.3,672.9L1144.9,673.7L1145.9,674.0L1155.2,674.0L1156.2,673.7L1156.6,673.3L1156.9,672.4L1156.9,667.7L1157.3,667.7L1157.4,672.9L1158.0,673.7L1159.0,674.0L1184.9,673.9L1185.4,673.7L1186.0,672.9L1186.1,667.7L1186.5,667.7L1186.6,672.9L1187.2,673.7L1188.2,674.0L1197.5,674.0L1198.5,673.7L1198.9,673.3L1199.2,672.4L1199.2,667.7L1199.6,667.7L1199.7,672.9L1200.3,673.7L1201.3,674.0L1227.3,673.9L1227.8,673.7L1228.4,672.9L1228.5,667.7L1228.9,667.7L1229.0,672.9L1229.6,673.7L1230.6,674.0L1239.9,674.0L1240.9,673.7L1241.3,673.3L1241.6,672.4L1241.6,667.7L1242.0,667.7L1242.1,672.9L1242.3,673.3L1243.2,673.9L1269.2,674.0L1270.2,673.7L1270.8,672.9L1270.9,667.7L1271.3,667.7L1271.3,672.4L1271.6,673.3L1272.5,673.9L1274.8,674.0L1274.8,681.9L1274.5,682.6L1274.3,683.8L1274.3,686.8L1274.8,688.5L1275.7,689.7L1277.0,690.4L1278.1,690.6L1281.6,690.6L1282.7,690.4L1284.3,689.4L1289.0,684.5L1289.7,683.6L1290.0,682.2L1290.1,620.7L1289.9,619.5L1289.0,618.0L1280.4,609.4L1279.5,608.8L1277.7,608.3L1214.6,608.4L1213.2,608.8L1212.5,609.2L1212.0,609.7L1211.3,611.0L1211.1,612.1L1211.1,616.7L1203.0,616.7L1203.0,616.3L1209.0,616.3L1210.0,616.0L1210.4,615.6L1210.7,614.6L1210.7,606.4L1210.4,605.4L1210.0,605.0L1209.0,604.7L1184.6,604.7L1183.6,605.0L1183.2,605.4L1182.9,606.4L1183.0,615.1L1183.2,615.6L1184.1,616.2L1190.6,616.3L1190.6,616.7L1182.5,616.7L1182.5,612.1L1182.0,610.4L1181.1,609.2L1180.4,608.8L1178.7,608.3L1117.7,608.4L1117.6,606.2L1117.0,605.3L1116.0,605.0L1038.6,605.1L1037.7,605.7L1037.4,606.7L1037.4,662.4L1028.4,671.4L893.0,671.4L891.1,671.8L889.8,672.4L874.8,682.1L874.2,682.8L859.9,682.8L858.9,683.1L858.5,683.5L858.2,684.5L858.3,709.5L858.9,710.4L859.9,710.7L869.1,710.7ZM1270.9,655.3L1270.9,649.4L1270.6,648.4L1269.7,647.8L1263.4,647.7L1263.4,647.3L1271.3,647.3L1271.3,655.3ZM1249.5,647.3L1249.5,647.7L1243.2,647.8L1242.3,648.4L1242.0,649.4L1242.0,655.3L1241.6,655.3L1241.6,647.3ZM1228.9,647.3L1228.9,655.3L1228.5,655.3L1228.5,649.4L1228.2,648.4L1227.3,647.8L1221.0,647.7L1221.0,647.3ZM1207.1,647.3L1207.1,647.7L1200.8,647.8L1199.9,648.4L1199.6,649.4L1199.6,655.3L1199.2,655.3L1199.2,647.3ZM1186.1,655.3L1186.1,649.4L1185.8,648.4L1184.9,647.8L1178.6,647.7L1178.6,647.3L1186.5,647.3L1186.5,655.3ZM1164.8,647.3L1164.8,647.7L1158.5,647.8L1157.6,648.4L1157.3,649.4L1157.3,655.3L1156.9,655.3L1156.9,647.3ZM1144.2,647.3L1144.2,655.3L1143.8,655.3L1143.8,649.4L1143.5,648.4L1142.6,647.8L1136.3,647.7L1136.3,647.3ZM1122.4,647.3L1122.4,647.7L1116.1,647.8L1115.2,648.4L1114.9,649.4L1114.9,655.3L1114.5,655.3L1114.5,647.3ZM1049.6,615.4L1114.3,615.4L1114.3,619.0L1057.2,619.0L1056.1,619.2L1054.8,619.9L1053.9,621.1L1053.4,622.8L1053.4,675.6L1049.6,675.7ZM1093.9,647.7L1093.9,647.3L1101.8,647.3L1101.8,655.3L1101.4,655.3L1101.4,649.4L1101.1,648.4L1100.7,648.0L1099.7,647.7ZM1079.0,647.3L1079.0,647.7L1072.7,647.8L1071.8,648.4L1071.5,649.4L1071.5,655.3L1071.1,655.3L1071.1,647.3ZM979.9,779.3L968.2,779.3L968.2,778.9L977.8,778.9L978.8,778.6L979.2,778.2L979.5,777.2L979.5,770.4L979.9,770.4ZM968.2,745.5L968.2,745.1L979.9,745.1L979.9,754.0L979.5,754.0L979.5,747.2L979.2,746.2L978.8,745.8L977.8,745.5ZM940.6,754.0L940.2,754.0L940.2,745.1L951.9,745.1L951.9,745.5L942.3,745.5L941.3,745.8L940.9,746.2L940.6,747.2ZM951.9,778.9L951.9,779.3L940.2,779.3L940.2,770.4L940.6,770.4L940.6,777.2L940.9,778.2L941.3,778.6L942.3,778.9ZM925.1,791.4L924.8,790.4L923.9,789.8L918.4,789.7L918.4,789.3L925.5,789.3L925.5,796.2L925.1,796.2ZM923.4,819.0L924.4,818.7L925.0,817.8L925.1,812.5L925.5,812.5L925.5,819.4L918.4,819.4L918.4,819.0ZM1207.4,460.5L1207.1,459.5L1206.2,458.9L1205.7,458.8L1179.8,458.8L1178.8,459.1L1178.4,459.5L1178.1,460.5L1178.1,482.3L1178.4,483.3L1179.3,483.9L1179.8,484.0L1205.7,484.0L1206.7,483.7L1207.3,482.8L1207.4,477.7L1228.9,477.7L1229.6,477.9L1250.0,477.9L1251.0,477.6L1251.6,476.7L1251.7,456.4L1251.4,455.4L1250.5,454.8L1229.6,454.7L1228.6,455.0L1228.2,455.4L1227.9,456.4L1227.9,466.3L1207.4,466.3ZM1210.7,530.7L1210.4,529.7L1210.0,529.3L1209.0,529.0L1184.6,529.0L1183.6,529.3L1183.2,529.7L1182.9,530.7L1182.9,547.0L1183.2,548.0L1183.6,548.4L1184.6,548.7L1209.0,548.7L1210.0,548.4L1210.4,548.0L1210.7,547.0ZM1207.4,491.2L1207.1,490.2L1206.2,489.6L1205.7,489.5L1179.8,489.5L1178.8,489.8L1178.4,490.2L1178.1,491.2L1178.1,513.0L1178.4,514.0L1178.8,514.4L1179.8,514.7L1205.7,514.7L1206.7,514.4L1207.1,514.0L1207.4,513.0ZM1164.5,429.4L1164.5,436.6L1164.8,437.6L1165.7,438.2L1189.4,438.3L1190.4,438.0L1190.8,437.6L1191.1,436.6L1191.1,411.4L1190.8,410.4L1189.9,409.8L1189.4,409.7L1165.7,409.8L1164.8,410.4L1164.5,411.4L1164.5,418.6L1136.5,418.6L1136.4,410.9L1135.8,410.0L1134.8,409.7L1113.0,409.7L1112.0,410.0L1111.4,410.9L1111.3,436.6L1111.6,437.6L1112.5,438.2L1135.3,438.2L1136.2,437.6L1136.5,436.6L1136.5,429.4ZM1184.5,819.2L1184.2,818.2L1183.8,817.8L1182.8,817.5L1118.0,817.5L1117.0,817.8L1116.6,818.2L1116.3,819.2L1116.3,853.3L1116.6,854.3L1117.0,854.7L1118.0,855.0L1182.8,855.0L1183.8,854.7L1184.2,854.3L1184.5,853.3ZM1180.3,542.0L1179.8,540.3L1178.9,539.1L1177.6,538.4L1176.1,538.3L1174.7,538.7L1174.0,539.2L1145.7,568.9L1145.0,570.1L1144.8,571.2L1144.8,586.7L1145.3,588.4L1146.2,589.6L1146.9,590.0L1148.3,590.4L1151.2,590.5L1152.9,590.0L1154.1,589.1L1154.8,587.8L1155.0,586.7L1155.0,573.8L1179.7,553.1L1180.4,552.2L1180.7,551.6L1181.0,550.0L1180.4,548.1L1180.3,546.9ZM1164.5,713.0L1164.2,712.0L1163.8,711.6L1162.8,711.3L1136.8,711.3L1135.8,711.6L1135.4,712.0L1135.1,713.0L1135.1,748.3L1135.4,749.3L1135.8,749.7L1136.8,750.0L1162.8,750.0L1163.8,749.7L1164.2,749.3L1164.5,748.3ZM986.8,412.2L985.1,410.7L983.3,409.6L981.1,408.7L978.9,408.1L976.5,407.9L946.0,407.9L943.8,408.1L941.5,408.6L939.3,409.5L937.1,410.9L935.3,412.4L933.8,414.2L932.7,416.0L931.7,418.4L931.2,420.7L931.0,422.8L931.2,425.1L931.7,427.4L932.6,429.6L933.8,431.6L935.5,433.6L937.3,435.1L939.3,436.3L941.5,437.2L943.5,437.7L946.0,437.9L976.5,437.9L978.9,437.7L981.1,437.1L983.3,436.2L985.3,434.9L987.1,433.4L988.4,431.8L989.8,429.6L990.7,427.4L991.2,425.4L991.4,423.0L994.8,423.0L994.8,436.0L995.1,437.0L995.5,437.4L996.5,437.7L1019.3,437.6L1020.1,437.0L1020.4,436.0L1020.3,409.9L1019.7,409.0L1018.8,408.7L1006.5,408.7L1006.5,395.3L1015.3,386.5L1121.8,386.5L1121.8,393.7L1122.1,394.7L1123.0,395.3L1145.7,395.4L1146.2,395.3L1147.1,394.7L1147.4,393.7L1147.4,368.4L1147.1,367.4L1146.2,366.8L1123.0,366.8L1122.1,367.4L1121.8,368.4L1121.8,375.5L1092.0,375.5L1092.0,353.7L1100.1,353.6L1101.0,353.0L1101.3,352.0L1101.3,283.4L1101.0,282.4L1100.6,282.0L1099.6,281.7L1074.0,281.7L1073.0,282.0L1072.4,282.9L1072.3,352.0L1072.6,353.0L1073.5,353.6L1081.0,353.7L1081.0,375.5L1013.0,375.5L1011.4,375.8L1010.1,376.4L1009.1,377.1L997.1,389.1L996.2,390.5L995.7,391.8L995.5,393.0L995.5,409.0L994.9,409.9L994.8,412.2ZM980.2,451.5L978.6,451.1L976.4,450.9L946.0,450.9L943.5,451.1L941.5,451.6L939.3,452.5L937.3,453.7L935.3,455.4L933.8,457.2L932.7,459.0L931.8,461.2L931.2,463.4L931.0,466.0L931.2,468.4L931.7,470.4L932.6,472.6L933.8,474.6L935.3,476.4L937.3,478.1L939.3,479.3L941.3,480.1L943.8,480.7L946.0,480.9L976.4,480.9L978.6,480.7L980.9,480.2L983.1,479.3L985.3,477.9L987.1,476.4L988.4,474.8L989.8,472.6L990.7,470.4L991.2,468.4L991.4,466.0L991.2,463.4L990.7,461.4L990.2,460.2L1030.0,460.2L1031.7,459.9L1033.0,459.3L1034.0,458.5L1044.0,448.5L1044.8,447.5L1045.4,446.2L1045.7,444.7L1045.7,438.2L1050.0,438.1L1050.9,437.5L1051.1,437.0L1051.2,428.1L1079.1,428.1L1079.1,436.8L1079.4,437.8L1080.3,438.4L1080.8,438.5L1086.6,438.5L1086.6,451.8L1080.8,451.8L1079.8,452.1L1079.2,453.0L1079.1,479.3L1079.4,480.3L1080.3,480.9L1080.8,481.0L1091.7,481.0L1091.7,487.2L1091.9,488.6L1092.6,489.9L1093.3,490.8L1104.3,501.4L1105.6,502.3L1106.9,502.8L1108.0,502.9L1126.8,502.9L1134.7,510.7L1134.7,528.8L1123.8,539.6L1091.5,539.7L1090.6,540.3L1090.3,541.2L1090.3,548.5L1090.6,549.5L1091.0,549.9L1092.0,550.2L1126.0,550.2L1127.6,550.0L1128.8,549.4L1129.7,548.7L1143.7,534.8L1144.7,533.5L1145.2,532.2L1145.3,531.0L1145.3,508.5L1145.1,506.9L1144.5,505.6L1143.9,504.9L1132.7,493.8L1131.5,492.9L1130.2,492.4L1129.0,492.3L1110.1,492.3L1102.3,484.7L1102.3,481.0L1103.0,480.9L1103.5,480.7L1103.9,480.3L1104.2,479.3L1104.2,453.5L1103.9,452.5L1103.0,451.9L1097.4,451.8L1097.4,438.5L1103.0,438.4L1103.9,437.8L1104.1,437.3L1104.2,410.6L1103.9,409.6L1103.0,409.0L1080.3,409.0L1079.4,409.6L1079.1,410.6L1079.1,418.1L1051.2,418.1L1051.2,410.6L1050.9,409.6L1050.0,409.0L1027.4,409.0L1026.5,409.6L1026.2,410.6L1026.3,437.0L1026.9,437.9L1027.9,438.2L1034.3,438.2L1034.3,442.2L1027.7,448.8L985.0,448.8L983.7,449.0L982.4,449.5L981.2,450.3ZM1114.3,687.6L1100.9,687.6L1100.8,681.9L1100.6,681.4L1099.7,680.8L1072.8,680.8L1071.9,681.4L1071.6,682.4L1071.7,705.5L1072.3,706.4L1073.3,706.7L1099.7,706.6L1100.6,706.0L1100.9,705.0L1100.9,698.4L1114.3,698.4L1114.3,704.5L1114.6,705.5L1115.5,706.1L1142.0,706.2L1143.0,705.9L1143.4,705.5L1143.7,704.5L1143.7,682.4L1143.4,681.4L1143.0,681.0L1142.0,680.7L1115.5,680.8L1115.0,681.0L1114.4,681.9ZM1047.7,501.7L1048.5,502.2L1049.0,502.3L1074.9,502.3L1081.3,508.7L1081.3,527.0L1081.5,528.1L1081.9,529.4L1082.8,530.6L1089.3,537.2L1090.6,538.2L1091.9,538.6L1093.0,538.8L1116.0,538.8L1117.0,538.5L1117.4,538.1L1117.7,537.1L1117.7,530.1L1117.4,529.1L1117.0,528.7L1116.0,528.4L1095.2,528.4L1091.7,524.9L1091.7,506.6L1091.4,505.1L1090.9,503.8L1090.2,502.9L1080.7,493.4L1079.8,492.7L1078.5,492.2L1077.0,491.9L1051.7,491.9L1051.7,474.2L1051.4,473.2L1051.0,472.8L1050.0,472.5L1027.9,472.5L1026.9,472.8L1026.5,473.2L1026.2,474.2L1026.2,500.0L1026.5,501.0L1027.4,501.6L1027.9,501.7ZM1117.2,562.6L1116.9,561.6L1116.0,561.0L1108.7,560.9L1108.7,560.2L1115.5,560.2L1116.5,559.9L1116.9,559.5L1117.2,558.5L1117.2,552.0L1116.9,551.0L1116.0,550.4L1090.0,550.3L1089.0,550.6L1088.4,551.5L1088.3,558.5L1088.6,559.5L1089.0,559.9L1090.0,560.2L1097.3,560.2L1097.3,560.9L1090.0,560.9L1089.0,561.2L1088.6,561.6L1088.3,562.6L1088.3,570.0L1088.6,571.0L1089.5,571.6L1116.0,571.6L1116.9,571.0L1117.2,570.0ZM804.6,298.9L804.5,293.5L803.9,292.6L802.9,292.3L734.6,292.4L733.7,293.0L733.4,294.0L733.4,319.7L733.7,320.7L734.6,321.3L735.1,321.4L802.9,321.4L803.9,321.1L804.5,320.2L804.6,315.3L807.1,315.3L807.1,323.1L806.1,323.5L804.9,324.4L804.2,325.7L804.1,327.1L804.2,327.9L804.9,329.2L807.9,331.4L808.9,332.7L809.6,334.3L809.8,336.1L809.8,353.7L810.0,354.8L811.0,356.4L818.2,363.4L819.9,365.5L820.9,367.9L821.3,370.6L821.3,418.6L821.4,419.7L822.0,420.9L823.0,421.8L824.3,422.3L826.3,422.6L827.8,423.2L829.0,424.2L830.0,425.4L830.6,426.9L830.8,428.6L830.8,451.2L830.6,452.9L830.0,454.3L829.8,455.4L829.9,456.8L830.6,458.5L830.8,460.2L830.8,482.1L830.6,483.8L830.0,485.3L829.0,486.5L827.8,487.5L826.3,488.1L823.6,488.6L822.5,489.4L821.7,490.5L821.3,492.1L821.5,494.6L821.7,495.1L822.5,496.2L823.6,497.0L826.3,497.5L827.8,498.1L829.0,499.1L830.0,500.3L830.6,501.8L830.8,503.5L830.8,524.8L830.6,526.5L829.9,528.2L829.8,529.7L830.0,530.8L830.6,532.2L830.8,533.9L830.8,555.8L830.6,557.5L830.0,559.0L829.0,560.2L827.8,561.2L826.3,561.8L823.6,562.3L823.1,562.6L822.1,563.5L821.5,564.7L821.3,566.2L821.7,567.8L822.5,568.9L823.6,569.7L826.3,570.2L827.8,570.8L829.0,571.8L830.0,573.0L831.3,576.6L832.2,577.6L832.8,578.0L834.4,578.4L839.9,578.4L842.4,578.7L844.7,579.5L846.8,581.0L849.5,583.4L850.7,584.0L851.8,584.2L870.1,584.2L871.7,584.4L873.1,585.0L874.4,585.8L875.7,586.0L877.0,585.9L878.9,585.1L880.5,584.9L902.8,584.9L904.4,585.1L905.8,585.7L907.0,586.6L907.9,587.8L908.9,590.7L909.9,591.9L911.2,592.7L912.7,592.8L914.2,592.3L915.3,591.3L916.0,589.9L916.2,588.5L916.8,587.1L917.7,585.9L919.4,584.4L920.0,583.1L920.1,582.5L920.0,581.2L919.4,579.9L917.7,578.4L916.8,577.2L916.2,575.8L916.0,574.2L916.0,547.8L916.2,546.2L916.8,544.8L917.7,543.6L918.9,542.7L920.3,542.1L921.9,541.9L944.9,541.9L946.5,542.1L948.0,542.7L949.1,543.0L950.6,542.8L952.4,542.1L954.0,541.9L975.6,541.9L977.2,542.1L978.6,542.7L979.8,543.6L980.7,544.8L981.3,546.2L981.7,550.2L982.4,551.5L982.9,551.9L984.2,552.6L988.2,553.1L990.3,553.9L992.2,555.2L1018.4,578.4L1019.3,578.9L1020.9,579.3L1063.8,579.3L1064.9,579.1L1066.2,578.4L1067.1,577.3L1067.5,575.5L1067.5,546.2L1067.1,544.8L1066.4,543.8L1061.5,538.9L1060.5,538.2L1059.1,537.8L1058.3,537.8L1056.9,538.2L1056.2,538.7L1055.7,539.1L1055.0,540.4L1054.7,543.7L1054.2,544.9L1053.4,545.9L1052.4,546.7L1051.2,547.2L1049.9,547.3L1028.0,547.3L1026.7,547.2L1025.5,546.7L1023.4,544.9L1022.7,544.6L1021.4,544.3L1019.8,544.3L1019.3,544.0L1018.8,543.9L1014.2,543.9L1014.2,543.5L1019.3,543.4L1020.1,542.8L1020.4,541.8L1020.3,516.2L1020.1,515.7L1019.3,515.1L1014.2,515.0L1014.2,514.6L1018.8,514.5L1019.6,513.9L1019.9,512.9L1019.7,511.9L1019.3,511.6L1018.0,510.9L1017.3,510.2L1016.7,509.4L1016.5,508.3L1016.6,507.0L1017.1,506.0L1019.0,504.2L1019.2,503.3L1019.1,502.8L1018.5,502.0L1018.1,501.8L1014.2,501.7L1014.2,501.3L1019.3,501.2L1020.1,500.6L1020.3,500.1L1020.4,474.2L1020.1,473.2L1019.7,472.8L1018.8,472.5L995.3,472.6L994.4,473.2L993.6,474.3L991.9,477.1L989.9,479.4L987.6,481.4L985.1,482.9L982.3,484.1L979.4,484.8L976.3,485.0L946.1,485.0L943.0,484.8L940.1,484.1L937.3,482.9L934.8,481.4L932.5,479.4L930.5,477.1L929.0,474.6L927.8,471.8L927.1,468.9L926.9,465.9L927.1,462.9L927.8,460.0L929.0,457.2L930.5,454.7L932.5,452.4L934.8,450.4L937.3,448.9L939.7,447.9L940.6,447.3L941.6,446.1L942.0,444.7L941.8,443.3L941.6,442.7L940.6,441.5L939.7,440.9L937.3,439.9L934.8,438.4L932.5,436.4L930.5,434.1L929.0,431.6L927.8,428.8L927.1,425.9L926.9,422.9L927.1,419.9L927.8,417.0L929.0,414.2L930.5,411.7L932.5,409.4L934.8,407.4L937.3,405.9L940.1,404.7L943.0,404.0L946.1,403.8L976.3,403.8L979.4,404.0L982.3,404.7L987.3,406.9L988.9,407.0L989.5,406.8L990.8,405.9L991.6,404.5L991.8,403.6L991.9,393.1L992.2,390.6L993.1,388.4L994.6,386.5L1006.5,374.6L1008.4,373.1L1010.6,372.2L1013.1,371.9L1072.2,371.9L1073.4,371.6L1074.1,371.3L1075.3,370.3L1075.9,368.8L1075.8,367.2L1075.5,366.3L1071.7,360.5L1070.6,359.5L1060.8,354.6L1059.5,354.3L1052.4,354.1L1052.4,353.7L1057.7,353.6L1058.6,353.0L1058.9,352.0L1058.9,283.4L1058.6,282.4L1057.7,281.8L1057.2,281.7L1031.2,281.7L1030.2,282.0L1029.8,282.4L1029.5,283.4L1029.5,309.4L1029.1,309.4L1029.1,299.3L1028.9,298.2L1028.2,296.9L1027.7,296.4L1026.4,295.7L1025.3,295.5L810.9,295.5L809.8,295.7L808.5,296.4L807.6,297.6L807.2,298.9ZM1029.1,354.1L1029.1,325.8L1029.5,325.8L1029.6,352.5L1029.8,353.0L1030.7,353.6L1036.3,353.7L1036.3,354.1ZM1000.0,514.6L1000.0,515.0L995.9,515.0L994.9,515.3L994.5,515.7L994.2,516.7L994.2,521.8L993.8,521.8L993.8,514.6ZM993.8,543.9L993.8,536.7L994.2,536.7L994.2,541.8L994.5,542.8L994.9,543.2L995.9,543.5L1000.0,543.5L1000.0,543.9ZM993.8,501.7L993.8,494.2L994.2,494.2L994.2,499.6L994.5,500.6L995.4,501.2L995.9,501.3L1000.0,501.3L1000.0,501.7ZM1042.2,685.3L1041.9,684.3L1041.5,683.9L1040.5,683.6L1016.6,683.6L1015.6,683.9L1015.2,684.3L1014.9,685.3L1014.9,712.4L1015.2,713.4L1015.6,713.8L1016.6,714.1L1040.5,714.1L1041.5,713.8L1041.9,713.4L1042.2,712.4ZM1018.3,629.7L1018.8,631.4L1019.7,632.6L1020.4,633.1L1020.4,663.8L1020.6,664.9L1021.3,666.2L1021.8,666.7L1023.1,667.4L1024.2,667.6L1029.8,667.6L1030.9,667.4L1031.5,667.1L1032.7,666.2L1033.4,664.9L1033.6,663.8L1033.5,629.6L1033.1,628.2L1025.4,614.6L1024.2,613.4L1022.9,612.8L1021.5,612.8L1020.2,613.2L1019.2,614.2L1018.5,615.4L1018.3,616.5ZM1008.5,714.1L1009.5,713.8L1009.9,713.4L1010.2,712.4L1010.2,685.3L1009.9,684.3L1009.0,683.7L984.8,683.7L983.9,684.3L983.6,685.3L983.6,693.0L976.9,693.0L976.9,685.3L976.6,684.3L975.7,683.7L943.7,683.6L942.7,683.9L942.1,684.8L942.0,709.0L942.3,710.0L943.2,710.6L975.2,710.7L976.2,710.4L976.8,709.5L976.9,704.6L983.6,704.6L983.6,712.4L983.9,713.4L984.8,714.0ZM904.6,609.4L920.1,609.4L920.1,617.3L920.4,618.3L921.3,618.9L945.0,619.0L946.0,618.7L946.4,618.3L946.7,617.3L946.6,589.5L946.4,589.0L945.5,588.4L940.6,588.3L940.6,576.0L945.5,575.9L946.4,575.3L946.7,574.3L946.7,547.7L946.4,546.7L946.0,546.3L945.0,546.0L921.8,546.0L920.8,546.3L920.2,547.2L920.2,574.8L920.8,575.7L921.8,576.0L927.6,576.0L927.6,588.3L921.8,588.3L920.8,588.6L920.4,589.0L920.1,590.0L920.1,598.6L904.6,598.6L904.6,590.7L904.3,589.7L903.4,589.1L880.4,589.0L879.4,589.3L879.0,589.7L878.7,590.7L878.7,616.6L879.0,617.6L879.4,618.0L880.4,618.3L903.4,618.2L904.3,617.6L904.6,616.6ZM826.4,594.6L837.6,594.6L845.9,602.0L845.9,616.2L846.2,617.2L847.1,617.8L870.2,617.9L871.2,617.6L871.8,616.7L871.9,590.0L871.6,589.0L871.2,588.6L870.2,588.3L849.2,588.3L843.9,583.7L843.1,583.0L841.7,582.5L840.0,582.2L826.4,582.2L826.4,576.1L826.1,575.1L825.7,574.7L824.7,574.4L817.3,574.4L817.3,557.6L824.7,557.6L825.7,557.3L826.3,556.4L826.4,533.8L826.1,532.8L825.7,532.4L824.7,532.1L798.5,532.2L797.6,532.8L797.3,533.8L797.4,556.4L798.0,557.3L799.0,557.6L807.1,557.6L807.1,574.4L799.0,574.4L798.0,574.7L797.4,575.6L797.4,599.4L798.0,600.3L799.0,600.6L825.2,600.5L825.7,600.3L826.3,599.4ZM826.4,650.7L826.1,649.7L825.2,649.1L817.3,649.0L817.3,632.7L824.7,632.7L825.7,632.4L826.3,631.5L826.4,607.8L826.1,606.8L825.7,606.4L824.7,606.1L799.0,606.1L798.0,606.4L797.6,606.8L797.3,607.8L797.4,631.5L798.0,632.4L799.0,632.7L807.1,632.7L807.1,649.0L799.0,649.0L798.0,649.3L797.4,650.2L797.3,672.9L797.6,673.9L798.0,674.3L799.0,674.6L824.7,674.6L825.7,674.3L826.1,673.9L826.4,672.9ZM798.5,453.0L825.2,452.9L826.1,452.3L826.4,451.3L826.3,428.0L825.7,427.1L824.7,426.8L816.8,426.8L816.8,370.5L816.7,369.3L816.2,368.0L815.2,366.7L805.0,356.8L805.0,336.0L804.7,335.0L803.8,334.4L803.3,334.3L735.1,334.3L734.1,334.6L733.7,335.0L733.4,336.0L733.4,362.5L733.7,363.5L734.1,363.9L735.1,364.2L797.3,364.2L806.2,372.8L806.2,426.8L798.5,426.8L797.5,427.1L796.9,428.0L796.9,451.8L797.5,452.7ZM807.1,501.7L799.0,501.7L798.0,502.0L797.4,502.9L797.3,524.9L797.6,525.9L798.0,526.3L799.0,526.6L824.7,526.6L825.7,526.3L826.1,525.9L826.4,524.9L826.3,502.9L825.7,502.0L824.7,501.7L817.3,501.7L817.3,483.9L824.7,483.9L825.7,483.6L826.3,482.7L826.4,460.1L826.1,459.1L825.2,458.5L799.0,458.4L798.0,458.7L797.4,459.6L797.4,482.7L798.0,483.6L799.0,483.9L807.1,483.9ZM806.2,759.8L797.4,768.5L735.1,768.5L734.1,768.8L733.7,769.2L733.4,770.2L733.4,796.2L733.7,797.2L734.1,797.6L735.1,797.9L803.3,797.9L804.3,797.6L804.7,797.2L805.0,796.2L805.0,776.1L815.3,765.8L816.2,764.5L816.7,763.2L816.8,762.0L816.8,706.4L824.7,706.4L825.7,706.1L826.3,705.2L826.4,681.7L826.1,680.7L825.2,680.1L798.5,680.0L797.5,680.3L796.9,681.2L796.9,705.2L797.5,706.1L798.5,706.4L806.2,706.4ZM733.4,404.9L733.7,405.9L734.6,406.5L735.1,406.6L760.7,406.6L760.7,407.0L745.4,407.0L744.3,407.2L743.0,407.9L742.5,408.4L741.8,409.7L741.6,410.8L741.6,722.0L741.8,723.1L742.5,724.4L743.0,724.9L744.3,725.6L745.4,725.8L760.7,725.8L760.7,726.4L735.1,726.4L734.1,726.7L733.7,727.1L733.4,728.1L733.5,754.5L734.1,755.4L735.1,755.7L803.8,755.6L804.7,755.0L805.0,754.0L805.0,728.1L804.7,727.1L804.3,726.7L803.3,726.4L777.3,726.4L777.3,725.8L798.3,725.7L799.7,725.3L800.4,724.9L801.3,723.7L801.7,722.3L801.7,714.5L801.3,712.9L801.0,712.3L800.0,711.4L798.7,710.9L796.9,710.6L795.4,710.0L794.2,709.0L793.2,707.8L792.6,706.3L792.4,704.6L792.4,681.8L792.6,680.1L793.4,678.1L793.7,676.8L793.5,675.5L793.1,674.5L792.9,672.8L792.9,650.8L793.1,649.1L793.7,647.6L794.7,646.4L795.9,645.4L797.4,644.8L799.3,644.5L800.7,643.9L801.7,642.7L802.2,641.3L802.1,639.8L801.3,638.4L800.1,637.5L799.0,637.1L797.4,636.9L795.9,636.3L794.7,635.3L793.7,634.1L793.1,632.6L792.9,630.9L792.9,607.9L793.1,606.2L793.8,604.5L793.9,603.0L793.7,601.9L793.1,600.5L792.9,598.8L792.9,576.2L793.1,574.5L793.7,573.0L794.7,571.8L795.9,570.8L797.4,570.2L799.6,569.9L801.0,569.5L802.2,568.6L802.6,567.9L803.1,566.2L802.9,564.7L802.6,564.1L801.7,562.9L800.4,562.2L797.4,561.8L795.9,561.2L794.7,560.2L793.7,559.0L793.1,557.5L792.9,555.8L792.9,533.9L793.1,532.2L793.7,530.8L793.9,529.7L793.8,528.2L793.1,526.5L792.9,524.8L792.9,503.5L793.1,501.8L793.7,500.3L794.7,499.1L795.9,498.1L797.4,497.5L800.4,497.1L801.7,496.4L802.6,495.2L802.9,494.6L803.1,493.5L803.1,492.1L802.6,490.4L801.7,489.2L800.4,488.5L797.4,488.1L795.9,487.5L794.7,486.5L793.7,485.3L793.1,483.8L792.9,482.1L792.9,460.2L793.1,458.5L793.5,457.5L793.7,456.2L793.4,454.9L792.6,452.9L792.4,451.2L792.4,428.6L792.6,426.9L793.2,425.4L794.2,424.2L795.4,423.2L796.9,422.6L798.7,422.3L800.0,421.8L801.0,420.9L801.3,420.3L801.7,418.7L801.7,410.5L801.3,409.1L800.4,407.9L799.7,407.5L798.3,407.1L777.3,407.0L777.3,406.6L803.3,406.6L803.8,406.5L804.7,405.9L805.0,404.9L804.9,377.5L804.3,376.6L803.3,376.3L734.6,376.4L733.7,377.0L733.4,378.0ZM803.3,840.6L804.3,840.3L804.7,839.9L805.0,838.9L805.0,813.2L804.7,812.2L803.8,811.6L735.1,811.5L734.1,811.8L733.5,812.7L733.4,838.9L733.7,839.9L734.6,840.5Z" fill="none" stroke="#ff2a2a" stroke-width="0.95" stroke-linejoin="round"/>
<path d="M802.9,313.6L808.8,313.6L808.8,324.7L807.0,324.9L806.3,325.3L805.9,326.0L805.7,326.8L805.9,327.6L806.3,328.3L809.1,330.2L810.4,331.9L811.2,333.9L811.5,336.0L811.5,353.7L811.7,354.5L812.1,355.2L819.5,362.3L821.4,364.7L822.5,367.5L823.0,370.5L823.0,418.6L823.1,419.4L823.5,420.0L824.1,420.5L826.7,421.0L828.6,421.7L830.2,423.0L831.5,424.6L832.2,426.5L832.5,428.5L832.5,451.3L832.2,453.3L831.4,455.7L832.2,458.1L832.5,460.1L832.5,482.2L832.2,484.2L831.5,486.1L830.2,487.7L828.6,489.0L826.7,489.7L824.1,490.2L823.5,490.7L823.1,491.3L823.0,492.1L823.1,494.3L823.5,494.9L824.1,495.4L826.7,495.9L828.6,496.6L830.2,497.9L831.5,499.5L832.2,501.4L832.5,503.4L832.5,524.9L832.2,526.9L831.4,529.4L832.2,531.8L832.5,533.8L832.5,555.9L832.2,557.9L831.5,559.8L830.2,561.4L828.6,562.7L826.7,563.4L824.1,563.9L823.5,564.4L823.1,565.0L823.0,565.8L823.1,567.0L823.5,567.6L824.1,568.1L826.7,568.6L828.6,569.3L830.2,570.6L831.5,572.2L832.2,574.1L832.6,575.6L833.0,576.2L833.7,576.6L840.0,576.7L842.8,577.0L845.5,578.1L847.8,579.7L851.0,582.4L851.8,582.5L870.2,582.5L872.1,582.8L873.9,583.5L875.2,584.3L875.9,584.4L878.5,583.5L880.4,583.2L902.9,583.2L904.8,583.5L906.6,584.2L908.2,585.4L909.4,587.0L910.5,590.2L911.1,590.8L911.9,591.1L912.7,591.1L913.5,590.8L914.1,590.2L914.6,588.1L915.3,586.3L916.5,584.7L918.2,583.2L918.4,582.5L918.4,581.8L918.2,581.1L916.5,579.6L915.3,578.0L914.6,576.2L914.3,574.3L914.3,547.7L914.6,545.8L915.3,544.0L916.5,542.4L918.1,541.2L919.9,540.5L921.8,540.2L945.0,540.2L946.9,540.5L949.5,541.3L952.0,540.5L953.9,540.2L975.7,540.2L977.6,540.5L979.4,541.2L981.0,542.4L982.2,544.0L982.9,545.8L983.2,549.0L983.4,549.9L983.8,550.5L984.5,551.0L985.3,551.1L988.6,551.5L991.0,552.4L993.2,553.9L1019.5,577.1L1020.2,577.5L1020.9,577.6L1063.8,577.6L1064.6,577.5L1065.2,577.0L1065.7,576.4L1065.8,575.5L1065.8,546.5L1065.7,545.7L1065.2,545.0L1060.3,540.1L1059.6,539.6L1058.6,539.5L1057.8,539.6L1057.1,540.1L1056.7,540.7L1056.3,544.2L1055.6,545.8L1054.6,547.1L1053.2,548.1L1051.7,548.8L1050.0,549.0L1027.9,549.0L1026.2,548.8L1024.7,548.1L1022.4,546.2L1021.4,546.0L1018.8,546.0L1018.8,545.6L1012.5,545.6L1012.5,541.8L1018.8,541.8L1018.8,516.7L1012.5,516.7L1012.5,512.9L1018.3,512.9L1017.1,512.3L1016.0,511.3L1015.2,510.0L1014.8,508.5L1014.9,507.0L1015.4,505.5L1016.3,504.3L1017.6,503.4L1012.5,503.4L1012.5,499.6L1018.8,499.6L1018.8,474.2L995.8,474.2L995.8,474.5L995.0,475.2L993.2,478.1L991.1,480.6L988.6,482.7L985.8,484.4L982.8,485.7L979.7,486.4L976.4,486.7L946.0,486.7L942.7,486.4L939.6,485.7L936.6,484.4L933.8,482.7L931.3,480.6L929.2,478.1L927.5,475.3L926.2,472.3L925.5,469.2L925.2,465.9L925.5,462.6L926.2,459.5L927.5,456.5L929.2,453.7L931.3,451.2L933.8,449.1L936.6,447.4L939.0,446.3L939.7,445.9L940.2,445.2L940.3,444.4L940.2,443.6L939.7,442.9L939.0,442.5L936.6,441.4L933.8,439.7L931.3,437.6L929.2,435.1L927.5,432.3L926.2,429.3L925.5,426.2L925.2,422.9L925.5,419.6L926.2,416.5L927.5,413.5L929.2,410.7L931.3,408.2L933.8,406.1L936.6,404.4L939.6,403.1L942.7,402.4L946.0,402.1L976.4,402.1L979.7,402.4L982.8,403.1L985.8,404.4L987.0,405.1L987.8,405.4L988.7,405.3L989.5,404.9L990.0,404.2L990.2,403.3L990.2,393.0L990.6,390.2L991.6,387.6L993.4,385.4L1005.4,373.4L1007.6,371.6L1010.2,370.6L1013.0,370.2L1072.2,370.2L1073.1,370.0L1073.8,369.5L1074.2,368.7L1074.3,367.8L1074.0,366.9L1070.3,361.5L1069.5,360.8L1060.4,356.2L1059.5,356.0L1056.0,356.0L1055.1,355.8L1050.7,355.8L1050.7,352.0L1057.2,352.0L1057.2,283.4L1031.2,283.4L1031.2,311.1L1027.4,311.1L1027.4,299.3L1027.2,298.5L1026.8,297.8L1026.1,297.4L1025.3,297.2L810.9,297.2L810.1,297.4L809.4,297.8L809.0,298.5L808.8,300.6L802.9,300.6L802.9,294.0L735.1,294.0L735.1,319.7L802.9,319.7ZM1027.4,355.8L1027.4,324.1L1031.2,324.1L1031.2,352.0L1038.0,352.0L1038.0,355.8ZM992.1,503.4L992.1,492.5L995.9,492.5L995.9,499.6L1001.7,499.6L1001.7,503.4ZM992.1,512.9L1001.7,512.9L1001.7,516.7L995.9,516.7L995.9,523.5L992.1,523.5ZM992.1,545.6L992.1,535.0L995.9,535.0L995.9,541.8L1001.7,541.8L1001.7,545.6ZM824.7,451.3L824.7,428.5L815.1,428.5L815.1,370.5L815.0,369.5L814.6,368.6L814.0,367.9L803.3,357.5L803.3,336.0L735.1,336.0L735.1,362.5L798.0,362.5L807.9,372.0L807.9,428.5L798.5,428.5L798.5,451.3ZM735.1,404.9L762.4,404.9L762.4,408.7L745.4,408.7L744.6,408.9L743.9,409.3L743.5,410.0L743.3,410.8L743.3,722.0L743.5,722.8L743.9,723.5L744.6,723.9L745.4,724.1L762.4,724.1L762.4,728.1L735.1,728.1L735.1,754.0L803.3,754.0L803.3,728.1L775.6,728.1L775.6,724.1L797.9,724.1L798.8,723.9L799.4,723.5L799.9,722.8L800.0,722.0L800.0,714.5L799.9,713.8L799.5,713.2L798.9,712.7L796.5,712.2L794.6,711.5L793.0,710.2L791.7,708.6L791.0,706.7L790.7,704.7L790.7,681.7L791.0,679.7L791.9,677.3L792.0,676.6L791.5,674.9L791.2,672.9L791.2,650.7L791.5,648.7L792.2,646.8L793.5,645.2L795.1,643.9L797.0,643.2L799.6,642.6L800.2,642.1L800.5,641.3L800.5,640.4L800.2,639.6L799.6,639.1L797.0,638.5L795.1,637.8L793.5,636.5L792.2,634.9L791.5,633.0L791.2,631.0L791.2,607.8L791.5,605.8L792.3,603.3L791.5,600.9L791.2,598.9L791.2,576.1L791.5,574.1L792.2,572.2L793.5,570.6L795.1,569.3L797.0,568.6L800.1,568.1L800.8,567.7L801.2,567.0L801.4,566.2L801.2,565.0L800.8,564.3L800.1,563.9L797.0,563.4L795.1,562.7L793.5,561.4L792.2,559.8L791.5,557.9L791.2,555.9L791.2,533.8L791.5,531.8L792.3,529.4L791.5,526.9L791.2,524.9L791.2,503.4L791.5,501.4L792.2,499.5L793.5,497.9L795.1,496.6L797.0,495.9L800.1,495.4L800.8,495.0L801.2,494.3L801.4,492.1L801.2,491.3L800.8,490.6L800.1,490.2L797.0,489.7L795.1,489.0L793.5,487.7L792.2,486.1L791.5,484.2L791.2,482.2L791.2,460.1L791.5,458.1L792.0,456.4L791.9,455.7L791.0,453.3L790.7,451.3L790.7,428.5L791.0,426.5L791.7,424.6L793.0,423.0L794.6,421.7L796.5,421.0L798.9,420.5L799.5,420.0L799.9,419.4L800.0,418.7L800.0,410.8L799.9,410.0L799.4,409.3L798.8,408.9L797.9,408.7L775.6,408.7L775.6,404.9L803.3,404.9L803.3,378.0L735.1,378.0ZM808.8,503.4L799.0,503.4L799.0,524.9L824.7,524.9L824.7,503.4L815.6,503.4L815.6,482.2L824.7,482.2L824.7,460.1L799.0,460.1L799.0,482.2L808.8,482.2ZM824.7,592.9L838.3,592.9L847.6,601.2L847.6,616.2L870.2,616.2L870.2,590.0L848.6,590.0L843.0,585.0L842.1,584.4L841.1,584.0L840.0,583.9L824.7,583.9L824.7,576.1L815.6,576.1L815.6,555.9L824.7,555.9L824.7,533.8L799.0,533.8L799.0,555.9L808.8,555.9L808.8,576.1L799.0,576.1L799.0,598.9L824.7,598.9ZM902.9,607.8L921.8,607.8L921.8,617.3L945.0,617.3L945.0,590.0L938.9,590.0L938.9,574.3L945.0,574.3L945.0,547.7L921.8,547.7L921.8,574.3L929.3,574.3L929.3,590.0L921.8,590.0L921.8,600.2L902.9,600.2L902.9,590.7L880.4,590.7L880.4,616.6L902.9,616.6ZM824.7,650.7L815.6,650.7L815.6,631.0L824.7,631.0L824.7,607.8L799.0,607.8L799.0,631.0L808.8,631.0L808.8,650.7L799.0,650.7L799.0,672.9L824.7,672.9ZM807.9,760.5L798.1,770.2L735.1,770.2L735.1,796.2L803.3,796.2L803.3,775.4L814.1,764.6L814.7,763.8L815.0,762.9L815.1,762.0L815.1,704.7L824.7,704.7L824.7,681.7L798.5,681.7L798.5,704.7L807.9,704.7ZM870.8,749.3L859.9,749.3L859.9,774.5L870.8,774.5L870.8,792.0L868.8,792.0L868.8,816.6L892.0,816.6L892.0,792.0L878.2,792.0L878.2,774.5L890.0,774.5L890.0,749.3L878.2,749.3L878.2,709.0L890.0,709.0L890.0,684.5L889.6,684.5L894.2,681.5L1047.9,681.5L1047.9,689.1L1047.2,690.0L1047.0,690.8L1047.0,712.4L1046.8,714.1L1046.1,715.7L1045.1,717.0L1043.8,718.0L1042.2,718.7L1040.5,718.9L1016.6,718.9L1014.9,718.7L1012.5,717.9L1010.2,718.7L1008.5,718.9L985.3,718.9L983.6,718.7L982.0,718.0L979.6,715.8L978.7,715.6L977.1,716.1L975.2,716.3L943.7,716.3L941.8,716.1L940.1,715.3L938.5,714.2L937.4,712.6L936.6,710.9L936.4,709.0L936.4,690.8L936.2,690.0L935.8,689.3L935.1,688.9L934.3,688.7L899.8,688.7L899.0,688.9L898.3,689.3L897.9,690.0L897.7,690.8L897.7,709.0L897.4,711.0L896.7,712.8L895.4,714.4L893.8,715.7L892.0,716.4L887.2,716.9L886.6,717.3L886.1,718.0L886.0,718.8L886.0,739.5L886.1,740.3L886.6,741.0L887.2,741.4L892.0,741.9L893.8,742.6L895.4,743.9L896.7,745.5L897.4,747.3L897.7,749.3L897.7,774.5L897.4,776.5L896.7,778.3L895.4,779.9L893.9,781.1L893.3,781.8L893.1,782.6L893.2,783.5L893.7,784.2L895.8,785.3L898.4,787.4L899.3,787.6L903.7,787.6L903.7,791.4L897.0,791.4L897.0,817.3L903.7,817.3L903.7,821.1L899.2,821.1L898.3,821.3L895.8,823.3L894.0,824.0L892.0,824.3L868.8,824.3L866.8,824.0L865.0,823.3L863.4,822.0L862.1,820.4L861.4,818.6L861.1,816.6L861.1,792.0L861.4,790.0L862.1,788.1L862.9,786.9L863.0,784.3L862.9,783.5L862.4,782.8L861.8,782.4L857.9,781.9L856.1,781.2L854.5,779.9L853.2,778.3L852.5,776.5L852.2,774.5L852.2,749.3L852.5,747.3L853.2,745.5L854.5,743.9L856.1,742.6L857.9,741.9L861.8,741.4L862.4,741.0L862.9,740.3L863.0,739.5L863.0,718.8L862.9,718.0L862.4,717.3L861.8,716.9L857.9,716.4L856.1,715.7L854.5,714.4L853.2,712.8L852.5,711.0L852.2,709.0L852.2,684.5L852.5,682.5L853.2,680.7L854.5,679.1L856.1,677.8L857.9,677.1L859.9,676.8L872.2,676.8L873.3,676.5L886.8,667.7L889.8,666.4L893.0,665.9L981.4,665.9L982.2,665.7L982.9,665.3L983.3,664.6L983.5,663.8L983.5,656.2L987.3,656.2L987.3,661.7L1014.6,661.7L1014.6,637.8L987.3,637.8L987.3,643.2L983.5,643.2L983.5,636.6L983.4,635.9L982.1,633.4L981.9,631.6L981.9,623.2L981.7,622.4L981.3,621.7L980.6,621.3L979.8,621.1L971.0,621.1L971.0,617.3L975.7,617.3L975.7,590.0L953.9,590.0L953.9,617.3L958.5,617.3L958.5,621.1L952.5,621.1L951.6,621.3L950.3,622.6L948.7,623.8L946.9,624.5L945.0,624.8L921.8,624.8L919.9,624.5L918.1,623.8L916.5,622.6L915.3,621.0L914.6,619.2L914.1,617.1L913.5,616.5L912.7,616.2L911.9,616.2L911.1,616.5L910.5,617.1L909.4,620.3L908.2,621.9L906.6,623.1L904.8,623.8L902.9,624.1L880.4,624.1L878.5,623.8L875.5,622.5L874.6,622.5L872.1,623.4L870.2,623.7L847.6,623.7L845.7,623.4L843.9,622.7L842.3,621.5L841.1,619.9L840.4,618.1L840.1,616.2L840.1,605.1L839.9,604.3L839.4,603.5L835.5,600.2L834.0,600.1L833.2,600.3L832.5,600.7L832.0,601.4L831.4,603.3L832.2,605.8L832.5,607.8L832.5,631.0L832.2,633.0L831.5,634.9L830.2,636.5L828.6,637.8L826.7,638.5L824.1,639.1L823.5,639.6L823.2,640.4L823.2,641.3L823.5,642.1L824.1,642.6L826.7,643.2L828.6,643.9L830.2,645.2L831.5,646.8L832.2,648.7L832.5,650.7L832.5,672.9L832.2,674.9L831.4,677.3L832.2,679.7L832.5,681.7L832.5,704.7L832.2,706.7L831.5,708.6L830.2,710.2L828.6,711.5L826.7,712.2L824.1,712.7L823.5,713.2L823.1,713.8L823.0,714.6L823.0,762.0L822.6,765.0L821.4,767.7L819.6,770.1L812.1,777.6L811.7,778.3L811.5,779.1L811.5,796.2L811.2,798.3L810.4,800.3L809.1,802.0L807.2,803.6L807.0,804.3L807.0,805.1L807.2,805.8L809.1,807.4L810.4,809.1L811.2,811.1L811.5,813.2L811.5,838.9L811.2,841.0L810.4,843.0L809.1,844.7L807.4,846.0L805.6,846.9L805.2,847.6L805.0,848.4L805.2,850.0L805.6,850.7L806.3,851.1L807.1,851.3L1108.4,851.3L1109.2,851.1L1109.9,850.7L1110.3,850.0L1110.5,849.2L1110.5,819.2L1110.8,817.3L1111.5,815.5L1113.5,813.1L1113.7,812.2L1113.6,811.3L1113.1,810.6L1092.2,789.7L1091.5,788.9L1091.1,787.9L1091.0,786.8L1091.0,714.6L1090.8,713.8L1090.4,713.1L1089.7,712.7L1088.9,712.5L1073.3,712.5L1071.4,712.2L1069.5,711.5L1068.0,710.3L1066.8,708.8L1066.1,706.9L1065.8,705.0L1065.8,682.4L1066.0,680.7L1066.0,672.4L1069.4,672.4L1069.4,666.0L1073.2,666.0L1073.2,672.4L1099.7,672.4L1099.7,666.0L1103.5,666.0L1103.5,672.4L1112.8,672.4L1112.8,666.0L1116.6,666.0L1116.6,672.4L1142.1,672.4L1142.1,666.0L1145.9,666.0L1145.9,672.4L1155.2,672.4L1155.2,666.0L1159.0,666.0L1159.0,672.4L1184.4,672.4L1184.4,666.0L1188.2,666.0L1188.2,672.4L1197.5,672.4L1197.5,666.0L1201.3,666.0L1201.3,672.4L1226.8,672.4L1226.8,666.0L1230.6,666.0L1230.6,672.4L1239.9,672.4L1239.9,666.0L1243.7,666.0L1243.7,672.4L1269.2,672.4L1269.2,666.0L1273.0,666.0L1273.0,672.4L1276.5,672.4L1276.5,682.4L1276.2,682.9L1276.0,683.8L1276.0,686.8L1276.2,687.6L1276.6,688.3L1277.3,688.7L1278.1,688.9L1281.6,688.9L1282.4,688.7L1283.1,688.3L1287.8,683.3L1288.2,682.7L1288.4,681.9L1288.4,620.7L1288.2,619.9L1287.8,619.2L1279.2,610.6L1278.5,610.2L1277.7,610.0L1214.9,610.0L1214.1,610.2L1213.4,610.6L1213.0,611.3L1212.8,612.1L1212.8,618.4L1201.3,618.4L1201.3,614.6L1209.0,614.6L1209.0,606.4L1184.6,606.4L1184.6,614.6L1192.3,614.6L1192.3,618.4L1180.8,618.4L1180.8,612.1L1180.6,611.3L1180.2,610.6L1179.5,610.2L1178.7,610.0L1118.1,610.0L1117.3,610.2L1116.6,610.6L1116.2,611.3L1116.0,612.1L1116.0,606.7L1039.1,606.7L1039.1,663.1L1029.1,673.1L893.0,673.1L891.8,673.3L890.7,673.8L875.7,683.5L876.4,684.5L859.9,684.5L859.9,709.0L870.8,709.0ZM1047.9,679.4L1047.9,613.7L1116.0,613.7L1116.0,620.7L1057.2,620.7L1056.4,620.9L1055.7,621.3L1055.3,622.0L1055.1,622.8L1055.1,677.3L1050.0,677.3L1049.2,677.5L1048.5,677.9L1048.1,678.6ZM923.4,817.3L923.4,810.8L927.2,810.8L927.2,821.1L916.7,821.1L916.7,817.3ZM923.4,791.4L916.7,791.4L916.7,787.6L927.2,787.6L927.2,797.8L923.4,797.8ZM981.6,781.0L966.5,781.0L966.5,777.2L977.8,777.2L977.8,768.7L981.6,768.7ZM966.5,747.2L966.5,743.4L981.6,743.4L981.6,755.7L977.8,755.7L977.8,747.2ZM942.3,755.7L938.5,755.7L938.5,743.4L953.5,743.4L953.5,747.2L942.3,747.2ZM953.5,777.2L953.5,781.0L938.5,781.0L938.5,768.7L942.3,768.7L942.3,777.2ZM1145.9,645.6L1145.9,657.0L1142.1,657.0L1142.1,649.4L1134.6,649.4L1134.6,645.6ZM1124.1,645.6L1124.1,649.4L1116.6,649.4L1116.6,657.0L1112.8,657.0L1112.8,645.6ZM1092.2,649.4L1092.2,645.6L1103.5,645.6L1103.5,657.0L1099.7,657.0L1099.7,649.4ZM1069.4,645.6L1080.7,645.6L1080.7,649.4L1073.2,649.4L1073.2,657.0L1069.4,657.0ZM1166.5,645.6L1166.5,649.4L1159.0,649.4L1159.0,657.0L1155.2,657.0L1155.2,645.6ZM1184.4,657.0L1184.4,649.4L1176.9,649.4L1176.9,645.6L1188.2,645.6L1188.2,657.0ZM1269.2,657.0L1269.2,649.4L1261.7,649.4L1261.7,645.6L1273.0,645.6L1273.0,657.0ZM1239.9,645.6L1251.2,645.6L1251.2,649.4L1243.7,649.4L1243.7,657.0L1239.9,657.0ZM1197.5,645.6L1208.8,645.6L1208.8,649.4L1201.3,649.4L1201.3,657.0L1197.5,657.0ZM1230.6,645.6L1230.6,657.0L1226.8,657.0L1226.8,649.4L1219.3,649.4L1219.3,645.6ZM803.3,838.9L803.3,813.2L735.1,813.2L735.1,838.9ZM997.2,393.0L997.2,410.4L996.5,410.4L996.5,413.9L986.1,413.9L984.2,412.1L982.4,411.0L980.5,410.3L978.5,409.8L976.4,409.6L946.0,409.6L943.9,409.8L941.9,410.3L940.0,411.0L938.2,412.1L936.6,413.5L935.2,415.1L934.1,416.9L933.4,418.8L932.9,420.8L932.7,422.9L932.9,425.0L933.4,427.0L934.1,428.9L935.2,430.7L936.6,432.3L938.2,433.7L940.0,434.8L941.9,435.5L943.9,436.0L946.0,436.2L976.4,436.2L978.5,436.0L980.5,435.5L982.4,434.8L984.2,433.7L985.8,432.3L987.2,430.7L988.3,428.9L989.0,427.0L989.5,425.0L989.7,422.9L989.6,421.4L996.5,421.4L996.5,436.0L1018.8,436.0L1018.8,410.4L1004.8,410.4L1004.8,394.6L1014.6,384.8L1123.5,384.8L1123.5,393.7L1145.7,393.7L1145.7,368.4L1123.5,368.4L1123.5,377.2L1090.3,377.2L1090.3,352.0L1099.6,352.0L1099.6,283.4L1074.0,283.4L1074.0,352.0L1082.7,352.0L1082.7,377.2L1013.0,377.2L1012.0,377.3L1011.1,377.7L1010.3,378.3L998.3,390.3L997.7,391.1L997.3,392.0ZM1036.0,442.8L1028.3,450.5L985.0,450.5L984.0,450.6L983.0,451.0L982.2,451.7L981.5,452.5L981.1,453.5L978.5,452.8L976.4,452.6L946.0,452.6L943.9,452.8L941.9,453.3L940.0,454.0L938.2,455.1L936.6,456.5L935.2,458.1L934.1,459.9L933.4,461.8L932.9,463.8L932.7,465.9L932.9,468.0L933.4,470.0L934.1,471.9L935.2,473.7L936.6,475.3L938.2,476.7L940.0,477.8L941.9,478.5L943.9,479.0L946.0,479.2L976.4,479.2L978.5,479.0L980.5,478.5L982.4,477.8L984.2,476.7L985.8,475.3L987.2,473.7L988.3,471.9L989.0,470.0L989.5,468.0L989.7,465.9L989.5,463.8L989.0,461.8L988.3,459.9L987.4,458.5L1030.0,458.5L1031.0,458.4L1032.0,458.0L1032.8,457.3L1042.8,447.3L1043.5,446.5L1043.9,445.5L1044.0,444.5L1044.0,436.5L1049.5,436.5L1049.5,426.5L1080.8,426.5L1080.8,436.8L1088.2,436.8L1088.2,453.5L1080.8,453.5L1080.8,479.3L1093.3,479.3L1093.3,487.0L1093.5,488.0L1093.9,488.9L1094.5,489.6L1106.2,500.8L1108.0,501.2L1127.5,501.2L1136.3,510.0L1136.3,529.5L1124.5,541.2L1092.0,541.2L1092.0,548.5L1126.9,548.4L1127.8,548.1L1128.6,547.5L1142.6,533.6L1143.2,532.8L1143.5,531.9L1143.7,531.0L1143.7,508.5L1143.5,507.5L1143.2,506.7L1142.6,505.9L1130.8,494.4L1129.9,494.1L1129.0,494.0L1109.5,494.0L1100.7,485.4L1100.7,479.3L1102.5,479.3L1102.5,453.5L1095.8,453.5L1095.8,436.8L1102.5,436.8L1102.5,410.6L1080.8,410.6L1080.8,419.8L1049.5,419.8L1049.5,410.6L1027.9,410.6L1027.9,436.5L1036.0,436.5ZM1049.0,500.6L1075.6,500.6L1083.0,508.0L1083.1,527.9L1084.0,529.5L1090.5,536.1L1091.2,536.6L1092.1,537.0L1093.0,537.1L1116.0,537.1L1116.0,530.1L1094.5,530.1L1090.0,525.6L1089.9,505.7L1089.0,504.1L1078.8,494.1L1077.0,493.6L1050.0,493.6L1050.0,474.2L1027.9,474.2L1027.9,500.0L1049.0,500.0ZM1050.0,532.6L1062.5,532.6L1072.6,542.8L1072.6,577.6L1072.8,578.5L1073.1,579.4L1073.7,580.2L1074.5,580.8L1075.4,581.1L1076.3,581.2L1116.7,581.2L1116.7,584.9L1017.4,584.9L987.7,558.8L986.0,558.4L975.7,558.4L975.7,547.7L953.9,547.7L953.9,574.3L975.7,574.3L975.7,565.6L984.6,565.6L1013.6,591.2L1014.3,591.7L1016.0,592.1L1116.7,592.1L1116.7,586.7L1116.9,587.5L1117.3,588.2L1118.0,588.6L1118.8,588.8L1137.4,588.8L1138.2,588.6L1138.9,588.2L1139.3,587.5L1139.5,586.7L1139.5,569.0L1139.9,567.3L1173.9,531.6L1175.7,533.1L1176.5,533.3L1177.3,533.1L1178.0,532.7L1178.4,532.0L1178.8,529.1L1179.4,527.7L1180.4,526.5L1181.6,525.5L1183.9,524.7L1184.5,524.2L1184.9,523.5L1185.0,522.6L1184.8,521.8L1184.4,521.1L1183.7,520.7L1177.9,520.2L1176.0,519.5L1174.5,518.3L1173.3,516.8L1172.6,514.9L1172.3,513.0L1172.3,491.2L1172.6,489.3L1173.4,486.8L1172.6,484.2L1172.3,482.3L1172.3,460.5L1172.6,458.6L1173.3,456.8L1174.5,455.2L1176.0,454.0L1177.9,453.3L1179.8,453.0L1205.7,453.0L1207.6,453.3L1209.4,454.0L1211.0,455.2L1212.2,456.8L1213.2,459.4L1213.7,460.0L1214.3,460.4L1220.0,460.5L1220.8,460.3L1221.5,459.9L1221.9,459.2L1222.4,454.5L1223.1,452.7L1224.3,451.1L1225.8,449.9L1227.7,449.2L1229.6,448.9L1250.0,448.9L1251.9,449.2L1254.7,450.5L1255.4,450.6L1267.5,450.6L1267.5,454.4L1263.0,454.4L1263.0,477.5L1267.5,477.5L1267.5,481.3L1256.3,481.3L1255.6,481.4L1253.8,482.7L1251.9,483.4L1250.0,483.7L1214.8,483.5L1214.0,483.7L1213.3,484.1L1212.8,484.7L1212.7,485.5L1212.8,486.3L1214.9,492.2L1215.4,492.9L1216.1,493.4L1216.9,493.6L1227.0,493.6L1228.7,494.0L1246.0,511.3L1246.5,513.0L1246.5,552.9L1246.6,553.8L1247.1,554.4L1247.7,554.9L1248.5,555.0L1305.7,555.0L1306.5,554.9L1307.2,554.4L1307.7,553.6L1307.8,552.8L1307.6,550.6L1307.8,547.5L1308.6,544.4L1309.8,541.5L1311.4,538.8L1313.5,536.5L1315.8,534.4L1318.5,532.8L1322.7,531.1L1323.3,530.5L1323.6,529.8L1323.6,529.0L1323.3,528.3L1322.7,527.7L1318.5,526.0L1315.8,524.4L1313.5,522.3L1311.4,520.0L1309.8,517.3L1308.6,514.4L1307.8,511.3L1307.6,508.2L1307.8,505.1L1308.6,502.0L1309.8,499.1L1311.4,496.4L1313.5,494.1L1315.8,492.0L1318.5,490.4L1321.4,489.2L1324.5,488.4L1327.6,488.2L1353.4,488.2L1356.5,488.4L1359.6,489.2L1362.5,490.4L1365.2,492.0L1367.5,494.1L1370.1,497.1L1371.3,497.9L1414.3,540.9L1416.6,544.0L1418.0,547.4L1418.5,551.2L1418.5,719.5L1418.0,723.3L1416.6,726.7L1414.3,729.8L1330.3,813.8L1327.3,816.0L1323.8,817.5L1320.1,818.0L1192.4,818.5L1191.6,818.6L1190.9,819.1L1190.5,819.8L1190.3,820.6L1190.3,849.2L1190.5,850.0L1190.9,850.7L1191.6,851.1L1192.4,851.3L1237.5,851.3L1239.7,853.7L1240.4,854.2L1244.7,856.0L1245.5,856.1L1246.3,856.0L1250.6,854.2L1251.3,853.7L1253.5,851.3L1448.1,851.3L1448.9,851.1L1450.4,849.9L1450.8,849.2L1451.0,848.4L1451.0,299.3L1450.8,298.5L1450.4,297.8L1449.7,297.4L1448.9,297.2L1148.5,297.2L1147.7,297.4L1147.0,297.8L1146.6,298.5L1146.4,299.3L1146.4,311.1L1142.0,311.1L1142.0,283.4L1116.1,283.4L1116.1,352.0L1142.0,352.0L1142.0,324.1L1146.4,324.1L1146.5,356.0L1151.1,362.3L1151.8,363.0L1152.8,363.2L1159.7,363.2L1159.7,367.0L1155.3,367.0L1155.3,374.0L1154.0,374.2L1153.3,374.6L1152.9,375.3L1152.7,376.1L1152.7,384.9L1152.9,385.7L1153.3,386.4L1154.0,386.8L1155.3,387.0L1155.3,394.0L1159.7,394.0L1159.7,395.9L1160.0,397.0L1160.0,402.8L1160.2,403.6L1160.6,404.3L1161.3,404.7L1162.1,404.9L1164.3,404.2L1166.2,403.9L1189.4,403.9L1191.3,404.2L1193.2,404.9L1194.9,406.1L1202.6,406.2L1202.6,410.0L1197.5,410.0L1197.5,438.0L1202.6,438.0L1202.6,441.8L1194.9,441.9L1193.2,443.1L1191.3,443.8L1189.4,444.1L1166.2,444.1L1164.3,443.8L1162.5,443.1L1160.9,441.9L1159.7,440.4L1159.0,438.5L1158.5,436.4L1158.1,435.8L1157.4,435.4L1156.7,435.2L1144.3,435.2L1143.6,435.4L1142.9,435.8L1142.5,436.4L1142.0,438.5L1141.3,440.3L1140.1,441.9L1138.8,443.1L1138.6,443.9L1138.6,459.4L1134.8,459.4L1134.8,453.7L1112.3,453.7L1112.3,478.2L1134.8,478.2L1134.8,472.4L1138.6,472.4L1138.6,485.7L1136.2,485.9L1135.5,486.4L1135.0,487.1L1134.9,488.0L1135.2,488.8L1147.5,500.9L1149.2,503.1L1150.3,505.7L1150.7,508.5L1150.7,531.0L1150.3,533.8L1149.2,536.3L1147.5,538.6L1133.5,552.5L1131.3,554.1L1128.7,555.2L1126.0,555.5L1124.6,555.5L1123.8,555.7L1123.1,556.2L1122.7,556.8L1122.3,560.3L1122.5,562.6L1122.5,570.0L1122.3,571.8L1121.6,573.5L1120.4,574.9L1119.0,576.1L1117.3,576.9L1116.9,577.6L1116.7,578.4L1116.7,574.0L1080.0,574.0L1080.0,541.3L1079.8,540.4L1079.5,539.5L1078.9,538.7L1065.8,525.8L1064.9,525.5L1064.0,525.4L1050.0,525.4L1050.0,515.4L1027.9,515.4L1027.9,542.5L1050.0,542.5ZM1177.0,394.0L1177.0,387.0L1180.8,387.0L1180.8,397.8L1172.7,397.8L1172.7,394.0ZM1177.0,367.0L1172.7,367.0L1172.7,363.2L1180.8,363.2L1180.8,374.0L1177.0,374.0ZM1224.5,406.2L1224.5,417.5L1220.7,417.5L1220.7,410.0L1215.6,410.0L1215.6,406.2ZM1220.7,430.5L1224.5,430.5L1224.5,441.8L1215.6,441.8L1215.6,438.0L1220.7,438.0ZM1288.7,450.6L1288.7,459.4L1284.9,459.4L1284.9,454.4L1280.5,454.4L1280.5,450.6ZM1284.9,472.4L1288.7,472.4L1288.7,481.3L1280.5,481.3L1280.5,477.5L1284.9,477.5ZM1006.9,606.4L988.7,606.4L988.7,631.6L1013.2,631.6L1013.2,611.5L1021.7,603.0L1281.5,603.0L1295.4,616.9L1295.4,685.6L1285.5,695.9L1269.2,695.9L1269.2,682.3L1242.6,682.3L1242.6,689.0L1227.6,689.0L1227.6,682.3L1200.3,682.3L1200.3,689.0L1184.6,689.0L1184.6,682.3L1158.7,682.3L1158.7,704.8L1184.6,704.8L1184.6,697.0L1200.3,697.0L1200.3,704.8L1227.6,704.8L1227.6,697.0L1242.6,697.0L1242.6,704.8L1269.2,704.8L1269.2,703.1L1287.0,703.1L1288.0,703.0L1288.8,702.6L1289.6,702.0L1301.6,689.5L1302.5,687.9L1302.6,615.4L1302.5,614.5L1302.1,613.6L1301.5,612.9L1285.5,596.9L1284.8,596.3L1283.9,595.9L1283.0,595.8L1019.0,595.8L1018.1,595.9L1017.2,596.3L1016.5,596.9ZM1020.0,629.7L1020.2,630.5L1020.6,631.2L1021.3,631.6L1022.1,631.8L1022.1,663.8L1022.3,664.6L1022.7,665.3L1023.4,665.7L1024.2,665.9L1029.8,665.9L1030.6,665.7L1031.3,665.3L1031.7,664.6L1031.9,663.8L1031.9,630.0L1031.6,629.0L1023.9,615.4L1023.4,614.8L1022.7,614.5L1022.0,614.4L1021.2,614.6L1020.6,615.0L1020.1,615.7L1020.0,616.5ZM1008.5,712.4L1008.5,685.3L985.3,685.3L985.3,694.7L975.2,694.7L975.2,685.3L943.7,685.3L943.7,709.0L975.2,709.0L975.2,702.9L985.3,702.9L985.3,712.4ZM1040.5,685.3L1016.6,685.3L1016.6,712.4L1040.5,712.4ZM1166.2,427.8L1166.2,436.6L1189.4,436.6L1189.4,411.4L1166.2,411.4L1166.2,420.2L1134.8,420.2L1134.8,411.4L1113.0,411.4L1113.0,436.6L1134.8,436.6L1134.8,427.8ZM1115.5,562.6L1107.0,562.6L1107.0,558.5L1115.5,558.5L1115.5,552.0L1090.0,552.0L1090.0,558.5L1099.0,558.5L1099.0,562.6L1090.0,562.6L1090.0,570.0L1115.5,570.0ZM1178.4,541.2L1178.0,540.5L1177.3,540.1L1176.5,539.9L1175.7,540.1L1175.0,540.6L1147.1,569.8L1146.7,570.5L1146.5,571.2L1146.5,586.7L1146.7,587.5L1147.1,588.2L1147.8,588.6L1148.6,588.8L1151.2,588.8L1152.0,588.6L1152.7,588.2L1153.1,587.5L1153.3,586.7L1153.3,573.0L1178.6,551.9L1179.1,551.2L1179.3,550.3L1178.8,548.6L1178.6,547.0L1178.6,542.0ZM1116.0,689.2L1099.2,689.2L1099.2,682.4L1073.3,682.4L1073.3,705.0L1099.2,705.0L1099.2,696.8L1116.0,696.8L1116.0,704.5L1142.0,704.5L1142.0,682.4L1116.0,682.4ZM1111.2,710.6L1111.1,709.8L1110.8,709.1L1109.5,707.3L1108.8,706.8L1108.0,706.6L1107.2,706.8L1106.5,707.3L1105.1,709.8L1105.0,710.6L1105.2,711.3L1105.7,712.0L1100.0,712.0L1100.0,782.0L1100.3,784.0L1101.0,785.8L1102.2,787.3L1124.7,809.5L1126.3,810.7L1128.1,811.5L1130.0,811.7L1320.0,811.0L1322.0,810.7L1323.8,810.0L1325.3,808.8L1409.3,724.8L1410.5,723.2L1411.2,721.4L1411.5,719.5L1411.5,551.2L1411.2,549.3L1410.5,547.5L1409.3,545.9L1366.3,502.9L1364.6,501.6L1363.9,500.6L1362.6,499.0L1361.0,497.7L1359.3,496.6L1357.4,495.8L1355.4,495.4L1353.4,495.2L1327.6,495.2L1325.6,495.4L1323.6,495.8L1321.7,496.6L1320.0,497.7L1318.4,499.0L1317.1,500.6L1316.0,502.3L1315.2,504.2L1314.8,506.2L1314.6,508.2L1314.8,510.2L1315.2,512.2L1316.0,514.1L1317.1,515.8L1318.4,517.4L1320.0,518.7L1321.7,519.8L1323.6,520.6L1325.6,521.0L1327.6,521.2L1353.4,521.2L1355.4,521.0L1357.4,520.6L1359.3,519.8L1361.0,518.8L1396.5,554.3L1396.5,716.4L1316.9,796.0L1133.1,796.7L1115.0,778.9L1115.0,760.0L1117.0,760.0L1117.0,748.6L1125.0,748.6L1125.0,712.0L1110.5,712.0L1111.0,711.3ZM1162.8,713.0L1136.8,713.0L1136.8,748.3L1162.8,748.3ZM1182.8,819.2L1118.0,819.2L1118.0,853.3L1182.8,853.3ZM1205.7,460.5L1179.8,460.5L1179.8,482.3L1205.7,482.3L1205.7,476.0L1250.0,476.2L1250.0,456.4L1229.6,456.4L1229.6,468.0L1205.7,468.0ZM1205.7,491.2L1179.8,491.2L1179.8,513.0L1205.7,513.0ZM1229.2,544.2L1229.6,544.9L1230.3,545.3L1232.0,545.5L1232.0,552.0L1188.6,552.0L1188.6,555.1L1188.4,554.3L1188.0,553.6L1187.3,553.2L1185.4,553.0L1184.6,553.2L1183.9,553.6L1183.5,554.3L1183.3,555.1L1183.3,586.7L1183.5,587.5L1183.9,588.2L1184.6,588.6L1185.4,588.8L1187.3,588.6L1188.0,588.2L1188.4,587.5L1188.6,586.7L1188.6,592.0L1288.5,592.0L1321.3,624.2L1320.0,625.0L1318.4,626.3L1317.1,627.9L1316.0,629.6L1315.2,631.5L1314.8,633.5L1314.6,635.5L1314.8,637.5L1315.2,639.5L1316.0,641.4L1317.1,643.1L1318.4,644.7L1320.0,646.0L1321.7,647.1L1323.6,647.9L1325.6,648.3L1327.6,648.5L1353.4,648.5L1355.4,648.3L1357.4,647.9L1359.3,647.1L1361.0,646.0L1362.6,644.7L1363.9,643.1L1365.0,641.4L1365.8,639.5L1366.2,637.5L1366.4,635.5L1366.2,633.5L1365.8,631.5L1365.0,629.6L1363.9,627.9L1362.6,626.3L1361.0,625.0L1359.3,623.9L1357.4,623.1L1355.4,622.7L1353.4,622.5L1330.2,622.5L1324.5,617.4L1292.5,585.8L1291.8,585.3L1290.9,584.9L1188.6,584.8L1188.6,581.0L1318.8,581.0L1320.7,582.5L1318.4,584.3L1317.1,585.9L1316.0,587.6L1315.2,589.5L1314.8,591.5L1314.6,593.5L1314.8,595.5L1315.2,597.5L1316.0,599.4L1317.1,601.1L1318.4,602.7L1320.0,604.0L1321.7,605.1L1323.6,605.9L1325.6,606.3L1327.6,606.5L1353.4,606.5L1355.4,606.3L1357.4,605.9L1359.3,605.1L1361.0,604.0L1362.6,602.7L1363.9,601.1L1365.0,599.4L1365.8,597.5L1366.2,595.5L1366.4,593.5L1366.2,591.5L1365.8,589.5L1365.0,587.6L1363.9,585.9L1362.6,584.3L1361.0,583.0L1359.3,581.9L1357.4,581.1L1355.4,580.7L1353.4,580.5L1329.8,580.5L1322.2,574.6L1321.5,574.1L1320.0,573.8L1188.6,573.8L1188.6,570.1L1320.8,570.0L1322.2,569.3L1329.6,563.6L1353.4,563.6L1355.4,563.4L1357.4,563.0L1359.3,562.2L1361.0,561.1L1362.6,559.8L1363.9,558.2L1365.0,556.5L1365.8,554.6L1366.2,552.6L1366.4,550.6L1366.2,548.6L1365.8,546.6L1365.0,544.7L1363.9,543.0L1362.6,541.4L1361.0,540.1L1359.3,539.0L1357.4,538.2L1355.4,537.8L1353.4,537.6L1327.6,537.6L1325.6,537.8L1323.6,538.2L1321.7,539.0L1320.0,540.1L1318.4,541.4L1317.1,543.0L1316.0,544.7L1315.2,546.6L1314.8,548.6L1314.6,550.6L1314.8,552.6L1315.2,554.6L1316.0,556.5L1317.1,558.2L1318.4,559.8L1320.6,561.5L1318.8,562.9L1188.6,562.9L1188.6,559.2L1232.0,559.2L1232.0,554.3L1232.2,555.1L1232.6,555.8L1233.3,556.2L1234.1,556.4L1237.5,556.4L1238.3,556.2L1238.9,555.8L1239.4,555.1L1239.5,554.3L1239.5,515.3L1239.4,514.5L1238.9,513.8L1226.2,501.1L1225.5,500.6L1224.7,500.4L1215.3,500.4L1214.5,500.6L1213.8,501.1L1213.4,501.7L1213.2,502.6L1213.2,511.9L1213.4,512.7L1213.8,513.4L1214.5,513.8L1215.3,514.0L1221.0,514.0L1229.0,522.0L1229.0,543.4ZM1209.0,530.7L1184.6,530.7L1184.6,547.0L1209.0,547.0ZM1373.2,547.5L1373.4,550.6L1373.2,553.7L1372.4,556.8L1371.2,559.7L1369.6,562.4L1367.5,564.7L1365.2,566.8L1362.5,568.4L1359.6,569.6L1357.2,570.3L1356.7,570.9L1356.4,571.7L1356.4,572.4L1356.7,573.2L1357.2,573.8L1359.6,574.5L1362.5,575.7L1365.2,577.3L1367.5,579.4L1369.6,581.7L1371.2,584.4L1372.4,587.3L1373.2,590.4L1373.4,593.5L1373.2,596.6L1372.4,599.7L1371.2,602.6L1369.6,605.3L1367.5,607.6L1365.2,609.7L1362.5,611.3L1359.5,612.6L1358.8,613.0L1358.4,613.7L1358.2,614.5L1358.4,615.3L1358.8,616.0L1359.5,616.4L1362.5,617.7L1365.2,619.3L1367.5,621.4L1369.6,623.7L1371.2,626.4L1372.4,629.3L1373.2,632.4L1373.4,635.5L1373.2,638.6L1372.4,641.7L1371.2,644.6L1369.6,647.3L1367.5,649.6L1365.2,651.7L1362.5,653.5L1362.1,654.1L1362.0,654.8L1362.1,664.0L1362.5,664.6L1365.3,666.9L1367.0,668.9L1368.7,672.0L1364.4,672.0L1362.6,669.6L1361.0,668.3L1359.3,667.2L1357.4,666.4L1355.4,666.0L1353.4,665.8L1327.6,665.8L1325.6,666.0L1323.6,666.4L1321.7,667.2L1320.0,668.3L1318.4,669.6L1317.2,671.0L1316.0,672.9L1315.2,674.8L1314.8,676.8L1314.6,678.8L1314.7,680.7L1315.2,682.8L1316.0,684.7L1317.1,686.4L1318.4,688.0L1319.8,689.2L1321.7,690.4L1323.6,691.2L1325.6,691.6L1327.6,691.8L1335.7,691.8L1335.7,695.6L1327.6,695.6L1325.0,695.4L1322.4,694.8L1320.0,693.8L1317.7,692.4L1315.7,690.7L1312.7,686.9L1311.9,686.6L1311.1,686.6L1310.3,686.9L1309.7,687.5L1309.3,689.7L1308.3,692.2L1306.6,694.3L1294.6,706.8L1292.4,708.6L1289.8,709.7L1287.0,710.1L1274.1,710.1L1273.4,710.2L1271.0,711.4L1269.2,711.6L1242.6,711.6L1240.8,711.4L1239.2,710.7L1237.8,709.6L1236.2,707.8L1235.5,707.5L1234.7,707.5L1234.0,707.8L1232.4,709.6L1231.0,710.7L1229.4,711.4L1227.6,711.6L1207.5,711.6L1206.7,711.8L1206.0,712.2L1205.6,712.9L1205.4,713.7L1205.4,725.5L1201.6,725.5L1201.6,714.0L1175.0,714.0L1175.0,750.0L1182.0,750.0L1182.0,755.4L1124.1,755.4L1123.3,755.6L1122.6,756.0L1122.2,756.7L1122.0,757.5L1122.0,775.1L1122.2,775.9L1122.6,776.6L1135.3,789.1L1136.0,789.5L1136.8,789.7L1313.1,789.0L1313.9,788.9L1314.6,788.4L1388.9,714.1L1389.3,713.4L1389.5,712.6L1389.5,558.1L1389.3,557.3L1388.9,556.6L1376.3,544.0L1375.7,543.6L1374.9,543.4L1374.2,543.5L1373.5,543.9L1373.0,544.5L1372.8,545.2ZM1356.0,695.4L1353.4,695.6L1345.3,695.6L1345.3,691.8L1353.4,691.8L1355.4,691.6L1357.4,691.2L1359.3,690.4L1361.0,689.3L1362.6,688.0L1364.5,685.5L1368.8,685.5L1367.0,688.7L1365.3,690.7L1363.3,692.4L1361.0,693.8L1358.6,694.8ZM1205.4,738.5L1205.4,753.8L1194.8,753.8L1194.8,750.0L1201.6,750.0L1201.6,738.5Z" fill="#cdf48b" fill-rule="evenodd" stroke="#5aa262" stroke-width="0.9" stroke-linejoin="round"/>
<path d="M607.5 270V870" stroke="#7a8a6a" stroke-opacity=".16" stroke-width="1" stroke-dasharray="1 2" fill="none"/>
<path d="M941 270V870" stroke="#7a8a6a" stroke-opacity=".16" stroke-width="1" stroke-dasharray="1 2" fill="none"/>
<path d="M1274.5 270V870" stroke="#7a8a6a" stroke-opacity=".16" stroke-width="1" stroke-dasharray="1 2" fill="none"/>
<path d="M1608 270V870" stroke="#7a8a6a" stroke-opacity=".16" stroke-width="1" stroke-dasharray="1 2" fill="none"/>
<path d="M722 277.5H1466" stroke="#7a8a6a" stroke-opacity=".16" stroke-width="1" stroke-dasharray="1 2" fill="none"/>
<path d="M722 444.2H1466" stroke="#7a8a6a" stroke-opacity=".16" stroke-width="1" stroke-dasharray="1 2" fill="none"/>
<path d="M722 610.8H1466" stroke="#7a8a6a" stroke-opacity=".16" stroke-width="1" stroke-dasharray="1 2" fill="none"/>
<path d="M722 777.5H1466" stroke="#7a8a6a" stroke-opacity=".16" stroke-width="1" stroke-dasharray="1 2" fill="none"/>
<path d="M721.5 556.6V269.5H1465.7V556.6M1465.7 583.4V869.4H721.5V583.4" fill="none" stroke="#ff2a2a" stroke-width="1"/>
<rect x="341.5" y="111.5" width="1543" height="888" fill="none" stroke="#2a2a2a" stroke-width="1"/>
</svg>
<span class="t" style="left:328.40px;top:105.78px;font-size:9px;line-height:9px;color:#111;letter-spacing:-0.405px;">70</span>
<span class="t" style="left:328.40px;top:272.48px;font-size:9px;line-height:9px;color:#111;letter-spacing:-0.405px;">60</span>
<span class="t" style="left:328.40px;top:439.18px;font-size:9px;line-height:9px;color:#111;letter-spacing:-0.405px;">50</span>
<span class="t" style="left:328.40px;top:605.78px;font-size:9px;line-height:9px;color:#111;letter-spacing:-0.405px;">40</span>
<span class="t" style="left:328.40px;top:772.48px;font-size:9px;line-height:9px;color:#111;letter-spacing:-0.405px;">30</span>
<span class="t" style="left:328.40px;top:939.18px;font-size:9px;line-height:9px;color:#111;letter-spacing:-0.405px;">20</span>
<span class="t" style="left:602.70px;top:1001.88px;font-size:9px;line-height:9px;color:#111;letter-spacing:-0.405px;">20</span>
<span class="t" style="left:936.20px;top:1001.88px;font-size:9px;line-height:9px;color:#111;letter-spacing:-0.405px;">40</span>
<span class="t" style="left:1269.70px;top:1001.88px;font-size:9px;line-height:9px;color:#111;letter-spacing:-0.405px;">60</span>
<span class="t" style="left:1603.20px;top:1001.88px;font-size:9px;line-height:9px;color:#111;letter-spacing:-0.405px;">80</span>
</div></div></body></html>
